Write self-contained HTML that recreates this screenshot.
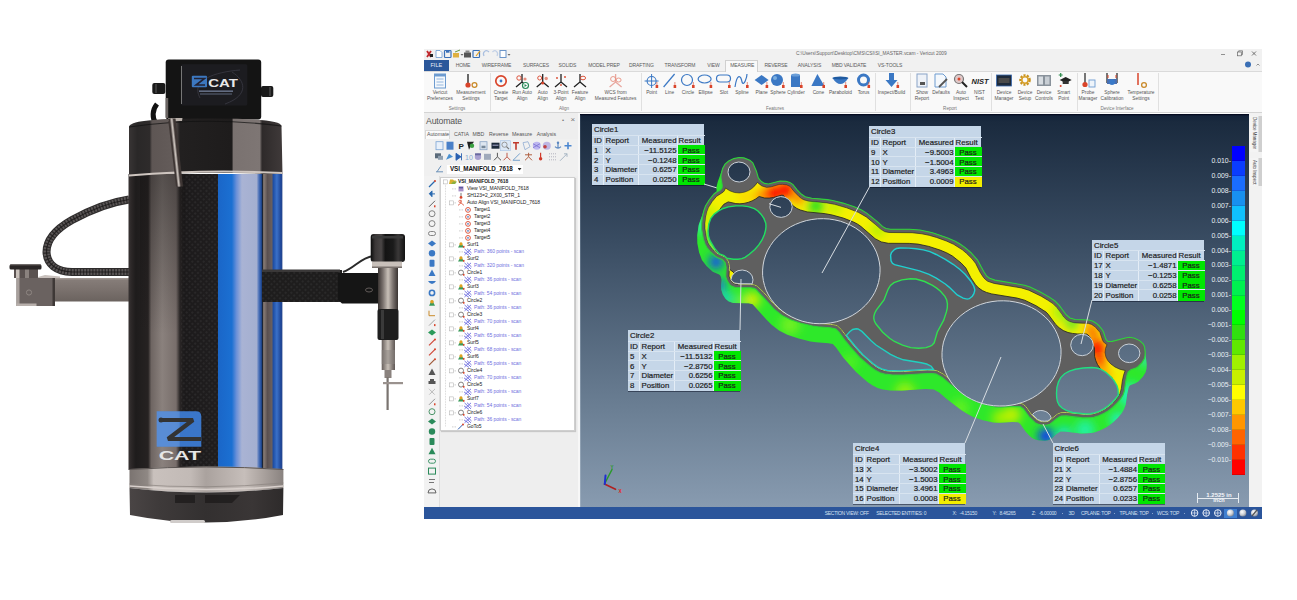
<!DOCTYPE html><html><head><meta charset="utf-8"><style>
*{margin:0;padding:0;box-sizing:border-box}
html,body{width:1297px;height:600px;overflow:hidden;background:#fff;font-family:"Liberation Sans", sans-serif}
.a{position:absolute}
.t{position:absolute;white-space:nowrap;line-height:1}
</style></head><body>
<div class="a" style="left:424px;top:48.5px;width:838px;height:22.5px;background:#f1f1f1"></div>
<div class="a" style="left:424px;top:71px;width:838px;height:42px;background:#f9f9f9;border-top:1px solid #dadada;border-bottom:1px solid #d4d4d4"></div>
<div class="a" style="left:424px;top:59.5px;width:24.5px;height:11.5px;background:#2b579a"></div>
<div class="t" style="left:430.5px;top:62.5px;font-size:5.5px;color:#e8eef8;">FILE</div>
<div class="a" style="left:725px;top:59.5px;width:33px;height:12px;background:#f9f9f9;border:1px solid #d0d0d0;border-bottom:none"></div>
<div class="t" style="left:455.6px;top:62.8px;font-size:5px;color:#5a5a5a;width:14.8px;text-align:center;letter-spacing:-0.1px">HOME</div>
<div class="t" style="left:479.85px;top:62.8px;font-size:5px;color:#5a5a5a;width:33.300000000000004px;text-align:center;letter-spacing:-0.1px">WIREFRAME</div>
<div class="t" style="left:521.2px;top:62.8px;font-size:5px;color:#5a5a5a;width:29.6px;text-align:center;letter-spacing:-0.1px">SURFACES</div>
<div class="t" style="left:556.4px;top:62.8px;font-size:5px;color:#5a5a5a;width:22.200000000000003px;text-align:center;letter-spacing:-0.1px">SOLIDS</div>
<div class="t" style="left:585.5px;top:62.8px;font-size:5px;color:#5a5a5a;width:37.0px;text-align:center;letter-spacing:-0.1px">MODEL PREP</div>
<div class="t" style="left:626.7px;top:62.8px;font-size:5px;color:#5a5a5a;width:29.6px;text-align:center;letter-spacing:-0.1px">DRAFTING</div>
<div class="t" style="left:663.35px;top:62.8px;font-size:5px;color:#5a5a5a;width:33.300000000000004px;text-align:center;letter-spacing:-0.1px">TRANSFORM</div>
<div class="t" style="left:706.0px;top:62.8px;font-size:5px;color:#5a5a5a;width:14.8px;text-align:center;letter-spacing:-0.1px">VIEW</div>
<div class="t" style="left:729.3499999999999px;top:62.8px;font-size:5px;color:#5a5a5a;width:25.900000000000002px;text-align:center;letter-spacing:-0.1px">MEASURE</div>
<div class="t" style="left:763.05px;top:62.8px;font-size:5px;color:#5a5a5a;width:25.900000000000002px;text-align:center;letter-spacing:-0.1px">REVERSE</div>
<div class="t" style="left:794.7px;top:62.8px;font-size:5px;color:#5a5a5a;width:29.6px;text-align:center;letter-spacing:-0.1px">ANALYSIS</div>
<div class="t" style="left:826.8px;top:62.8px;font-size:5px;color:#5a5a5a;width:44.400000000000006px;text-align:center;letter-spacing:-0.1px">MBD VALIDATE</div>
<div class="t" style="left:875.2px;top:62.8px;font-size:5px;color:#5a5a5a;width:29.6px;text-align:center;letter-spacing:-0.1px">VS-TOOLS</div>
<div class="t" style="left:796px;top:51.9px;font-size:4.85px;color:#666;">C:\Users\Support\Desktop\CMS\CSI\SI_MASTER.vcam - Vericut 2009</div>
<svg class="a" style="left:1210px;top:44px" width="54" height="30" viewBox="1210 44 54 30"><line x1="1221" y1="54.5" x2="1225" y2="54.5" stroke="#777" stroke-width="0.8"/><rect x="1237.5" y="52" width="3.8" height="3.8" fill="none" stroke="#666" stroke-width="0.7"/><path d="M1238.7 52 V50.8 H1242.5 V54.6 H1241.3" fill="none" stroke="#666" stroke-width="0.7"/><path d="M1252 51.5 L1256 55.5 M1256 51.5 L1252 55.5" stroke="#555" stroke-width="0.8"/><circle cx="1248" cy="64.5" r="3" fill="#3a6fb5"/><path d="M1256.5 65.5 L1258 64 L1259.5 65.5" fill="none" stroke="#666" stroke-width="0.7"/></svg>
<svg class="a" style="left:0;top:0" width="1297" height="130" viewBox="0 0 1297 130">
<rect x="434.5" y="74" width="11" height="14" fill="#f4f8fc" stroke="#6d9bd0" stroke-width="1"/><rect x="434.5" y="74" width="11" height="2.5" fill="#6d9bd0"/>
<line x1="436.5" y1="79" x2="443.5" y2="79" stroke="#8ab0dc" stroke-width="0.9"/>
<line x1="436.5" y1="82" x2="443.5" y2="82" stroke="#8ab0dc" stroke-width="0.9"/>
<line x1="436.5" y1="85" x2="443.5" y2="85" stroke="#8ab0dc" stroke-width="0.9"/>
<line x1="468" y1="74" x2="468" y2="84" stroke="#444" stroke-width="1.6"/><circle cx="468" cy="85" r="2.6" fill="#d9452b"/><circle cx="474.5" cy="85" r="2.4" fill="none" stroke="#c98a2a" stroke-width="1.3"/>
<circle cx="501" cy="81" r="5.2" fill="none" stroke="#d9452b" stroke-width="1.7"/><circle cx="501" cy="81" r="1.4" fill="#3b78c4"/>
<path d="M522 74 L522 82 L516 87 M522 82 L528 87" fill="none" stroke="#222" stroke-width="1.3"/>
<circle cx="519" cy="78" r="2.2" fill="none" stroke="#d9452b" stroke-width="0.9"/><circle cx="525" cy="79" r="1.6" fill="#e89080"/><circle cx="525.5" cy="85.5" r="3" fill="#fff" stroke="#2a8a5a" stroke-width="1.2"/><path d="M524.5 84 L527 85.5 L524.5 87 Z" fill="#2a8a5a"/>
<path d="M542.7 74 L542.7 82 L536.7 87 M542.7 82 L548.7 87" fill="none" stroke="#222" stroke-width="1.3"/>
<circle cx="539.7" cy="78" r="2" fill="none" stroke="#d9452b" stroke-width="0.9"/><circle cx="546.2" cy="78.5" r="1.7" fill="#e89080"/><circle cx="542.7" cy="83" r="1.5" fill="#d9452b"/>
<path d="M561 74 L561 82 L555 87 M561 82 L567 87" fill="none" stroke="#222" stroke-width="1.3"/>
<circle cx="557" cy="78" r="0.9" fill="#d9452b"/><circle cx="565" cy="77" r="0.9" fill="#d9452b"/><circle cx="561" cy="85" r="0.9" fill="#d9452b"/>
<path d="M580 74 L580 82 L574 87 M580 82 L586 87" fill="none" stroke="#222" stroke-width="1.3"/>
<ellipse cx="583" cy="78" rx="2.6" ry="1.8" fill="none" stroke="#d9452b" stroke-width="0.9"/>
<path d="M615.6 74 L615.6 82 L609.6 87 M615.6 82 L621.6 87" fill="none" stroke="#e8a8a0" stroke-width="1.3"/>
<ellipse cx="613.1" cy="79" rx="2.5" ry="2.5" fill="none" stroke="#e89080" stroke-width="0.9"/><ellipse cx="618.6" cy="80" rx="2.5" ry="2" fill="none" stroke="#e89080" stroke-width="0.9"/>
<circle cx="651.6" cy="81" r="4.5" fill="none" stroke="#3b78c4" stroke-width="1.1"/><path d="M644.6 81 H658.6 M651.6 74 V88" stroke="#3b78c4" stroke-width="1"/>
<rect x="655.6" y="85" width="2.6" height="3" fill="#d9452b"/><line x1="656.9" y1="82" x2="656.9" y2="85" stroke="#d9452b" stroke-width="0.6"/>
<line x1="663.6" y1="87" x2="674.6" y2="74" stroke="#3b78c4" stroke-width="1.2"/>
<rect x="673.6" y="85" width="2.6" height="3" fill="#d9452b"/><line x1="674.9" y1="82" x2="674.9" y2="85" stroke="#d9452b" stroke-width="0.6"/>
<circle cx="687" cy="80" r="5.5" fill="none" stroke="#3b78c4" stroke-width="1.2"/>
<rect x="692" y="85" width="2.6" height="3" fill="#d9452b"/><line x1="693.3" y1="82" x2="693.3" y2="85" stroke="#d9452b" stroke-width="0.6"/>
<ellipse cx="704.6" cy="79" rx="6.5" ry="4" fill="none" stroke="#3b78c4" stroke-width="1.2"/>
<rect x="709.6" y="85" width="2.6" height="3" fill="#d9452b"/><line x1="710.9" y1="82" x2="710.9" y2="85" stroke="#d9452b" stroke-width="0.6"/>
<path d="M720 75 H727 A3.5 3.5 0 0 1 727 82 H720 A3.5 3.5 0 0 1 720 75 Z" fill="none" stroke="#3b78c4" stroke-width="1.2"/>
<rect x="728" y="85" width="2.6" height="3" fill="#d9452b"/><line x1="729.3" y1="82" x2="729.3" y2="85" stroke="#d9452b" stroke-width="0.6"/>
<path d="M735 87 C737 73 741 75 742 82 C744 87 747 77 747 74" fill="none" stroke="#3b78c4" stroke-width="1.2"/>
<rect x="746" y="85" width="2.6" height="3" fill="#d9452b"/><line x1="747.3" y1="82" x2="747.3" y2="85" stroke="#d9452b" stroke-width="0.6"/>
<path d="M754.6 80 L761.6 75 L768.6 80 L761.6 85 Z" fill="#3b78c4"/>
<rect x="765.6" y="85" width="2.6" height="3" fill="#d9452b"/><line x1="766.9" y1="82" x2="766.9" y2="85" stroke="#d9452b" stroke-width="0.6"/>
<circle cx="777" cy="80" r="6" fill="#3b78c4"/><circle cx="775" cy="78" r="2" fill="#7aaee0"/>
<rect x="782" y="85" width="2.6" height="3" fill="#d9452b"/><line x1="783.3" y1="82" x2="783.3" y2="85" stroke="#d9452b" stroke-width="0.6"/>
<rect x="791" y="75" width="9" height="12" fill="#3b78c4"/><ellipse cx="795.5" cy="75" rx="4.5" ry="1.6" fill="#6a9ed8"/>
<rect x="800" y="85" width="2.6" height="3" fill="#d9452b"/><line x1="801.3" y1="82" x2="801.3" y2="85" stroke="#d9452b" stroke-width="0.6"/>
<path d="M817.4 74 L824.4 86 L811.4 86 Z" fill="#3b78c4"/>
<rect x="822.4" y="85" width="2.6" height="3" fill="#d9452b"/><line x1="823.6999999999999" y1="82" x2="823.6999999999999" y2="85" stroke="#d9452b" stroke-width="0.6"/>
<path d="M832.4 78 Q840.4 90 848.4 78 Z" fill="#3b78c4"/><ellipse cx="840.4" cy="78" rx="8" ry="1.5" fill="#1f5aa0"/>
<rect x="844.4" y="85" width="2.6" height="3" fill="#d9452b"/><line x1="845.6999999999999" y1="82" x2="845.6999999999999" y2="85" stroke="#d9452b" stroke-width="0.6"/>
<circle cx="863.5" cy="80" r="5" fill="none" stroke="#3b78c4" stroke-width="3"/>
<rect x="867.5" y="85" width="2.6" height="3" fill="#d9452b"/><line x1="868.8" y1="82" x2="868.8" y2="85" stroke="#d9452b" stroke-width="0.6"/>
<path d="M889.0 73 H894.0 V80 H897.5 L891.5 87 L885.5 80 H889.0 Z" fill="#3b78c4"/>
<rect x="896.5" y="85" width="2.6" height="3" fill="#d9452b"/><line x1="897.8" y1="82" x2="897.8" y2="85" stroke="#d9452b" stroke-width="0.6"/>
<rect x="917" y="74" width="10" height="13" fill="#eef2f8" stroke="#8aa4c8" stroke-width="1"/><rect x="920" y="82" width="5" height="3" fill="#555"/>
<path d="M935 74 H943 L946 77 V87 H935 Z" fill="#f4f8fc" stroke="#6d9bd0" stroke-width="1"/><path d="M939 87 L947 79" stroke="#555" stroke-width="1.8"/>
<circle cx="959" cy="79" r="4.5" fill="#e0c8c8" stroke="#777" stroke-width="1.2"/><circle cx="959" cy="79" r="1.5" fill="#d9452b"/><line x1="962" y1="82" x2="967" y2="87" stroke="#222" stroke-width="2"/>
<text x="971.5" y="84" font-family="Liberation Sans" font-weight="bold" font-style="italic" font-size="7.5" fill="#222">NIST</text>
<rect x="996.5" y="75" width="15" height="11" fill="#1e2a3a" stroke="#3a6ab0" stroke-width="0.8"/><rect x="998.5" y="78" width="11" height="5" fill="#4a4a4a"/>
<circle cx="1025" cy="80" r="4.5" fill="none" stroke="#c8921e" stroke-width="2.6" stroke-dasharray="2 1.2"/><circle cx="1025" cy="80" r="3.2" fill="none" stroke="#d8a22e" stroke-width="1.6"/>
<rect x="1037" y="75" width="14" height="11" fill="#8a939c"/><rect x="1038.5" y="76.5" width="4.5" height="8" fill="#d8dde2"/><rect x="1045" y="76.5" width="4.5" height="8" fill="#c8ced4"/>
<path d="M1059.7 80 L1065.7 77 L1071.7 80 L1065.7 83 Z" fill="#222"/><rect x="1062.7" y="81" width="6" height="3" fill="#333"/><path d="M1058.7 75 H1062.7 M1060.7 73 V77" stroke="#2a8a4a" stroke-width="1.2"/><circle cx="1060.7" cy="86" r="1" fill="#d9452b"/>
<line x1="1085" y1="73" x2="1085" y2="83" stroke="#555" stroke-width="1.6"/><circle cx="1085" cy="84.5" r="2.6" fill="#d9452b"/><rect x="1089" y="80" width="6" height="7" fill="#eef4fa" stroke="#6d9bd0" stroke-width="0.9"/>
<path d="M1107 73 V83 M1117 73 V83" stroke="#555" stroke-width="1.6"/><rect x="1107" y="79" width="10" height="5" fill="#4a6fb0"/><circle cx="1112" cy="82" r="3" fill="#3a7ac8"/><path d="M1108 75 V78 M1116 75 V78" stroke="#d9452b" stroke-width="1"/>
<line x1="1138" y1="73" x2="1138" y2="85" stroke="#d9452b" stroke-width="1.5"/><circle cx="1144" cy="85" r="2.4" fill="none" stroke="#c98a2a" stroke-width="1.3"/>
<path d="M427 51 L431 57 M431 51 L427 57" stroke="#c0282d" stroke-width="1.8"/><rect x="430" y="54" width="3" height="3" fill="#222"/>
<path d="M436 50.5 H440 L442 52.5 V57.5 H436 Z" fill="#fff" stroke="#6d9bd0" stroke-width="0.8"/>
<rect x="444.5" y="50.5" width="6.5" height="7" rx="0.8" fill="none" stroke="#3a70b8" stroke-width="1.2"/><rect x="446" y="50.5" width="3.5" height="2.2" fill="#3a70b8"/>
<path d="M453 53 H459 V57.5 H453 Z" fill="#e0b040"/><path d="M455 52 L460 50" stroke="#6a9a40" stroke-width="1"/><path d="M460.5 54 H463.5 L462 55.8 Z" fill="#666"/>
<rect x="464" y="52.5" width="7" height="5" fill="#555"/><rect x="465.5" y="50.5" width="4" height="2.5" fill="#888"/>
<rect x="473" y="50.5" width="6.5" height="7" rx="0.8" fill="none" stroke="#3a70b8" stroke-width="1.2"/><path d="M476 56 L480 51" stroke="#e0a020" stroke-width="1.2"/>
<path d="M484 56 C482 52 486 49 489 52" fill="none" stroke="#a9bfe0" stroke-width="1.2"/><path d="M493 56 C495 52 491 49 488.5 52" fill="none" stroke="#c0cfe6" stroke-width="1.2" transform="translate(4 0)"/>
<rect x="500" y="50.5" width="6" height="7" fill="#fff" stroke="#6c95c9" stroke-width="1"/><path d="M507.5 54 H510.5 L509 55.8 Z" fill="#666"/>
</svg>
<div class="a" style="left:489.5px;top:73px;width:1px;height:38px;background:#e0e0e0"></div>
<div class="a" style="left:640.5px;top:73px;width:1px;height:38px;background:#e0e0e0"></div>
<div class="a" style="left:874.5px;top:73px;width:1px;height:38px;background:#e0e0e0"></div>
<div class="a" style="left:910px;top:73px;width:1px;height:38px;background:#e0e0e0"></div>
<div class="a" style="left:991px;top:73px;width:1px;height:38px;background:#e0e0e0"></div>
<div class="a" style="left:1076.5px;top:73px;width:1px;height:38px;background:#e0e0e0"></div>
<div class="a" style="left:1157.5px;top:73px;width:1px;height:38px;background:#e0e0e0"></div>
<div class="t" style="left:410.0px;top:91px;font-size:4.8px;color:#555;width:60px;text-align:center">Vericut</div>
<div class="t" style="left:410.0px;top:96.6px;font-size:4.8px;color:#555;width:60px;text-align:center">Preferences</div>
<div class="t" style="left:441.0px;top:91px;font-size:4.8px;color:#555;width:60px;text-align:center">Measurement</div>
<div class="t" style="left:441.0px;top:96.6px;font-size:4.8px;color:#555;width:60px;text-align:center">Settings</div>
<div class="t" style="left:471.0px;top:91px;font-size:4.8px;color:#555;width:60px;text-align:center">Create</div>
<div class="t" style="left:471.0px;top:96.6px;font-size:4.8px;color:#555;width:60px;text-align:center">Target</div>
<div class="t" style="left:492.0px;top:91px;font-size:4.8px;color:#555;width:60px;text-align:center">Run Auto</div>
<div class="t" style="left:492.0px;top:96.6px;font-size:4.8px;color:#555;width:60px;text-align:center">Align</div>
<div class="t" style="left:512.7px;top:91px;font-size:4.8px;color:#555;width:60px;text-align:center">Auto</div>
<div class="t" style="left:512.7px;top:96.6px;font-size:4.8px;color:#555;width:60px;text-align:center">Align</div>
<div class="t" style="left:531.0px;top:91px;font-size:4.8px;color:#555;width:60px;text-align:center">3-Point</div>
<div class="t" style="left:531.0px;top:96.6px;font-size:4.8px;color:#555;width:60px;text-align:center">Align</div>
<div class="t" style="left:550.0px;top:91px;font-size:4.8px;color:#555;width:60px;text-align:center">Feature</div>
<div class="t" style="left:550.0px;top:96.6px;font-size:4.8px;color:#555;width:60px;text-align:center">Align</div>
<div class="t" style="left:585.6px;top:91px;font-size:4.8px;color:#555;width:60px;text-align:center">WCS from</div>
<div class="t" style="left:585.6px;top:96.6px;font-size:4.8px;color:#555;width:60px;text-align:center">Measured Features</div>
<div class="t" style="left:621.6px;top:91px;font-size:4.8px;color:#555;width:60px;text-align:center">Point</div>
<div class="t" style="left:639.6px;top:91px;font-size:4.8px;color:#555;width:60px;text-align:center">Line</div>
<div class="t" style="left:658.0px;top:91px;font-size:4.8px;color:#555;width:60px;text-align:center">Circle</div>
<div class="t" style="left:675.6px;top:91px;font-size:4.8px;color:#555;width:60px;text-align:center">Ellipse</div>
<div class="t" style="left:694.0px;top:91px;font-size:4.8px;color:#555;width:60px;text-align:center">Slot</div>
<div class="t" style="left:712.0px;top:91px;font-size:4.8px;color:#555;width:60px;text-align:center">Spline</div>
<div class="t" style="left:731.6px;top:91px;font-size:4.8px;color:#555;width:60px;text-align:center">Plane</div>
<div class="t" style="left:748.0px;top:91px;font-size:4.8px;color:#555;width:60px;text-align:center">Sphere</div>
<div class="t" style="left:766.0px;top:91px;font-size:4.8px;color:#555;width:60px;text-align:center">Cylinder</div>
<div class="t" style="left:788.4px;top:91px;font-size:4.8px;color:#555;width:60px;text-align:center">Cone</div>
<div class="t" style="left:810.4px;top:91px;font-size:4.8px;color:#555;width:60px;text-align:center">Paraboloid</div>
<div class="t" style="left:833.5px;top:91px;font-size:4.8px;color:#555;width:60px;text-align:center">Torus</div>
<div class="t" style="left:861.5px;top:91px;font-size:4.8px;color:#555;width:60px;text-align:center">Inspect/Build</div>
<div class="t" style="left:892.0px;top:91px;font-size:4.8px;color:#555;width:60px;text-align:center">Show</div>
<div class="t" style="left:892.0px;top:96.6px;font-size:4.8px;color:#555;width:60px;text-align:center">Report</div>
<div class="t" style="left:911.0px;top:91px;font-size:4.8px;color:#555;width:60px;text-align:center">Defaults</div>
<div class="t" style="left:931.0px;top:91px;font-size:4.8px;color:#555;width:60px;text-align:center">Auto</div>
<div class="t" style="left:931.0px;top:96.6px;font-size:4.8px;color:#555;width:60px;text-align:center">Inspect</div>
<div class="t" style="left:949.5px;top:91px;font-size:4.8px;color:#555;width:60px;text-align:center">NIST</div>
<div class="t" style="left:949.5px;top:96.6px;font-size:4.8px;color:#555;width:60px;text-align:center">Test</div>
<div class="t" style="left:974.0px;top:91px;font-size:4.8px;color:#555;width:60px;text-align:center">Device</div>
<div class="t" style="left:974.0px;top:96.6px;font-size:4.8px;color:#555;width:60px;text-align:center">Manager</div>
<div class="t" style="left:995.0px;top:91px;font-size:4.8px;color:#555;width:60px;text-align:center">Device</div>
<div class="t" style="left:995.0px;top:96.6px;font-size:4.8px;color:#555;width:60px;text-align:center">Setup</div>
<div class="t" style="left:1014.0px;top:91px;font-size:4.8px;color:#555;width:60px;text-align:center">Device</div>
<div class="t" style="left:1014.0px;top:96.6px;font-size:4.8px;color:#555;width:60px;text-align:center">Controls</div>
<div class="t" style="left:1033.7px;top:91px;font-size:4.8px;color:#555;width:60px;text-align:center">Smart</div>
<div class="t" style="left:1033.7px;top:96.6px;font-size:4.8px;color:#555;width:60px;text-align:center">Point</div>
<div class="t" style="left:1058.0px;top:91px;font-size:4.8px;color:#555;width:60px;text-align:center">Probe</div>
<div class="t" style="left:1058.0px;top:96.6px;font-size:4.8px;color:#555;width:60px;text-align:center">Manager</div>
<div class="t" style="left:1082.0px;top:91px;font-size:4.8px;color:#555;width:60px;text-align:center">Sphere</div>
<div class="t" style="left:1082.0px;top:96.6px;font-size:4.8px;color:#555;width:60px;text-align:center">Calibration</div>
<div class="t" style="left:1111.0px;top:91px;font-size:4.8px;color:#555;width:60px;text-align:center">Temperature</div>
<div class="t" style="left:1111.0px;top:96.6px;font-size:4.8px;color:#555;width:60px;text-align:center">Settings</div>
<div class="t" style="left:427.0px;top:107.2px;font-size:4.6px;color:#777;width:60px;text-align:center">Settings</div>
<div class="t" style="left:534.0px;top:107.2px;font-size:4.6px;color:#777;width:60px;text-align:center">Align</div>
<div class="t" style="left:745.0px;top:107.2px;font-size:4.6px;color:#777;width:60px;text-align:center">Features</div>
<div class="t" style="left:920.0px;top:107.2px;font-size:4.6px;color:#777;width:60px;text-align:center">Report</div>
<div class="t" style="left:1087.0px;top:107.2px;font-size:4.6px;color:#777;width:60px;text-align:center">Device Interface</div>
<div class="a" style="left:424px;top:113px;width:156px;height:394px;background:#eeeeee"></div>
<div class="t" style="left:426px;top:116.8px;font-size:8.7px;color:#555;letter-spacing:-0.15px">Automate</div>
<div class="t" style="left:562px;top:117px;font-size:6px;color:#777;">&#8226;</div>
<div class="t" style="left:570.5px;top:116px;font-size:8px;color:#777;">&#215;</div>
<div class="a" style="left:425.2px;top:130px;width:25.3px;height:9px;background:#fafafa;border:1px solid #d8d8d8;border-bottom:none"></div>
<div class="t" style="left:427px;top:132.2px;font-size:5.2px;color:#555;">Automate</div>
<div class="t" style="left:454px;top:132.2px;font-size:5.2px;color:#555;">CATIA</div>
<div class="t" style="left:472.6px;top:132.2px;font-size:5.2px;color:#555;">MBD</div>
<div class="t" style="left:489px;top:132.2px;font-size:5.2px;color:#555;">Reverse</div>
<div class="t" style="left:512px;top:132.2px;font-size:5.2px;color:#555;">Measure</div>
<div class="t" style="left:536.7px;top:132.2px;font-size:5.2px;color:#555;">Analysis</div>
<div class="a" style="left:424px;top:139px;width:154px;height:37px;background:#f0f0f0"></div>
<div class="a" style="left:424px;top:176px;width:16px;height:331px;background:#f2f2f2;border-right:1px solid #dedede"></div>
<svg class="a" style="left:0;top:0" width="600" height="520" viewBox="0 0 600 520"><rect x="436" y="141.7" width="7" height="8" fill="#e8f0fa" stroke="#7aa4d4" stroke-width="0.8"/><rect x="446.5" y="141.7" width="7" height="8" fill="#4a80c8"/><text x="458.5" y="148.7" font-family="Liberation Sans" font-weight="bold" font-size="8" fill="#222">P</text><path d="M467 141.7 H474 L471 145.7 L469 149.7 Z" fill="#222"/><circle cx="472" cy="145.7" r="2.2" fill="#3aa040"/><rect x="480" y="141.7" width="7" height="8" fill="#dde6f0" stroke="#8aa4c4" stroke-width="0.8"/><rect x="481.5" y="145.7" width="4" height="2.5" fill="#789"/><rect x="491.5" y="142.7" width="8" height="6" fill="#1e2a3a"/><rect x="492.5" y="144.7" width="6" height="1" fill="#aac"/><rect x="500.5" y="140.7" width="10" height="10" fill="#dce8f6" stroke="#a8c4e4" stroke-width="0.6"/><circle cx="504.5" cy="144.7" r="2.6" fill="none" stroke="#999" stroke-width="1"/><line x1="506.5" y1="146.7" x2="509" y2="149.2" stroke="#777" stroke-width="1.2"/><path d="M513 142.7 H519 M516 142.7 V149.7" stroke="#c0392b" stroke-width="1.6"/><path d="M523 142.7 L528 141.7 L530 146.7 L525 149.7 Z" fill="none" stroke="#9bb3d6" stroke-width="0.9"/><circle cx="536.8" cy="145.7" r="4" fill="#b0a8f0" opacity="0.8"/><path d="M533 143.7 L540 147.7 M533 147.7 L540 143.7" stroke="#7a70d0" stroke-width="0.8"/><circle cx="546.8" cy="145.7" r="4" fill="#b0a8e0" opacity="0.8"/><circle cx="545" cy="146.7" r="1.8" fill="#c04040"/><path d="M555 146.7 Q558 149.7 561 146.7 M558 142.7 V148.7" fill="none" stroke="#5a87c0" stroke-width="1.2"/><circle cx="558" cy="142.7" r="1.2" fill="#5a87c0"/><path d="M564.5 145.7 H571.5 M568 142.2 V149.2" stroke="#4a86d0" stroke-width="1.6"/><rect x="435" y="153.3" width="6" height="5" fill="#5a6a7a"/><rect x="438" y="155.8" width="5" height="4" fill="#90a0b0"/><path d="M446 159.8 L449 153.8 L453 156.8 Z" fill="#4a90d0"/><path d="M456 153.3 L461 156.8 L456 160.3 Z M461.5 153.3 V160.3" fill="#2a60b0" stroke="#2a60b0" stroke-width="0.9"/><text x="465" y="159.8" font-family="Liberation Sans" font-size="7" fill="#88a8d0">10</text><circle cx="478" cy="156.8" r="3.2" fill="#a8a0d0"/><rect x="475" y="153.3" width="6" height="2" fill="#6a6aa0"/><rect x="484" y="153.8" width="7" height="6" fill="#a0aabb"/><path d="M497.4 152.8 V156.8 L494 160.3 M497.4 156.8 L501 160.3" fill="none" stroke="#555" stroke-width="1"/><path d="M507 152.8 V156.8 L503.5 160.3 M507 156.8 L510.5 160.3" fill="none" stroke="#c05a4a" stroke-width="1"/><path d="M513 160.3 L520 153.3 M513 160.3 H520" fill="none" stroke="#6a9ac8" stroke-width="0.9"/><path d="M528.6 152.8 V156.8 L525 160.3 M528.6 156.8 L532 160.3 M525 154.8 H532" fill="none" stroke="#b06040" stroke-width="1"/><line x1="540.6" y1="152.8" x2="540.6" y2="157.8" stroke="#d03a2a" stroke-width="1.2"/><circle cx="540.6" cy="158.8" r="1.7" fill="#d03a2a"/><path d="M549 153.8 H557 M549 156.8 H557 M549 159.8 H557" stroke="#99a" stroke-width="0.7" stroke-dasharray="1 1"/><path d="M560 160.8 L567 153.8 M564 153.8 H567 V156.8" fill="none" stroke="#a0b0c0" stroke-width="0.9"/><path d="M436 171.8 H443 M437 171.8 L441 165.8" stroke="#6a90b8" stroke-width="1"/><line x1="429" y1="187.0" x2="435" y2="181.0" stroke="#2a6ab0" stroke-width="1.2"/><circle cx="435" cy="181.0" r="1" fill="#d9452b"/><path d="M429 193.9 L432 190.9 L432 196.9 M432 193.9 H435" fill="#2a6ab0" stroke="#2a6ab0" stroke-width="1"/><line x1="429" y1="206.8" x2="435" y2="200.8" stroke="#555" stroke-width="0.9"/><rect x="434" y="205.3" width="1.5" height="2" fill="#d9452b"/><circle cx="432" cy="213.7" r="3" fill="none" stroke="#777" stroke-width="0.9"/><circle cx="432" cy="223.6" r="3" fill="none" stroke="#777" stroke-width="0.9"/><rect x="428.5" y="231.5" width="7" height="4" rx="2" fill="none" stroke="#777" stroke-width="0.9"/><path d="M428 243.4 L432 240.4 L436 243.4 L432 246.4 Z" fill="#3a78c4"/><circle cx="432" cy="253.3" r="3.2" fill="#3a78c4"/><rect x="429.5" y="259.7" width="5" height="7" rx="1" fill="#3a78c4"/><path d="M432 269.6 L435.5 276.1 L428.5 276.1 Z" fill="#3a78c4"/><path d="M428 281.0 Q432 287.0 436 281.0 Z" fill="#3a78c4"/><circle cx="432" cy="292.9" r="2.6" fill="none" stroke="#3a78c4" stroke-width="1.6"/><path d="M429 305.8 L432 299.8 L435 305.8 Z" fill="#3a9a5a"/><circle cx="432" cy="301.8" r="1.8" fill="#e0a020"/><path d="M429 315.70000000000005 V310.70000000000005 M429 315.70000000000005 H435" stroke="#c98a2a" stroke-width="1"/><line x1="429" y1="325.6" x2="435" y2="319.6" stroke="#999" stroke-width="0.9"/><rect x="434" y="324.1" width="1.5" height="2" fill="#d9452b"/><path d="M428 332.5 L432 329.5 L436 332.5 L432 335.5 Z" fill="#2a9a5a"/><line x1="429" y1="345.4" x2="435" y2="339.4" stroke="#d04a3a" stroke-width="1.2"/><circle cx="435" cy="339.4" r="1" fill="#d9452b"/><line x1="429" y1="355.3" x2="435" y2="349.3" stroke="#d04a3a" stroke-width="1.2"/><circle cx="435" cy="349.3" r="1" fill="#d9452b"/><line x1="429" y1="365.20000000000005" x2="435" y2="359.20000000000005" stroke="#a05a3a" stroke-width="1.2"/><circle cx="435" cy="359.20000000000005" r="1" fill="#d9452b"/><path d="M432 368.6 L435.5 375.1 L428.5 375.1 Z" fill="#555"/><rect x="428.5" y="381.0" width="7" height="3" fill="#555"/><rect x="430" y="379.0" width="4" height="2" fill="#555"/><path d="M429 388.9 L435 394.9 M435 388.9 L429 394.9" stroke="#666" stroke-width="0.7" stroke-dasharray="0.8 0.8"/><line x1="429" y1="404.8" x2="435" y2="398.8" stroke="#888" stroke-width="0.9"/><rect x="434" y="403.3" width="1.5" height="2" fill="#d9452b"/><circle cx="432" cy="411.70000000000005" r="3" fill="none" stroke="#3a8a5a" stroke-width="0.9"/><path d="M428 421.6 L432 418.6 L436 421.6 L432 424.6 Z" fill="#2a8a5a"/><circle cx="432" cy="431.5" r="3.2" fill="#2a8a5a"/><rect x="429.5" y="437.90000000000003" width="5" height="7" rx="1" fill="#2a8a5a"/><path d="M432 447.8 L435.5 454.3 L428.5 454.3 Z" fill="#2a8a5a"/><rect x="428.5" y="459.2" width="7" height="4" rx="2" fill="none" stroke="#2a8a5a" stroke-width="0.9"/><rect x="428.5" y="468.1" width="7" height="6" fill="none" stroke="#2a8a5a" stroke-width="1"/><path d="M429 479.5 H435 M429 482.5 H434" stroke="#555" stroke-width="0.8"/><path d="M428 492.90000000000003 A4 4 0 0 1 436 492.90000000000003 Z" fill="none" stroke="#555" stroke-width="0.9"/></svg>
<div class="a" style="left:446.8px;top:165px;width:76px;height:8.5px;background:#fff"></div>
<div class="t" style="left:450px;top:166.2px;font-size:6.3px;color:#111;font-weight:bold;letter-spacing:-0.1px">VSI_MANIFOLD_7618</div>
<div class="a" style="left:517.5px;top:168px;width:4px;height:2.5px;background:#222;clip-path:polygon(0 0,100% 0,50% 100%)"></div>
<div class="a" style="left:440px;top:177px;width:134.5px;height:253.5px;background:#fff;border:1px solid #cfcfcf;box-shadow:1px 1px 1px #c8c8c8"></div>
<div class="t" style="left:458px;top:179.3px;font-size:5.0px;color:#1a1a1a;font-weight:bold;letter-spacing:-0.05px">VSI_MANIFOLD_7618</div>
<div class="t" style="left:467px;top:186.3px;font-size:5.0px;color:#1a1a1a;letter-spacing:-0.05px">View VSI_MANIFOLD_7618</div>
<div class="t" style="left:467px;top:193.3px;font-size:5.0px;color:#1a1a1a;letter-spacing:-0.05px">SH123=2_2X00_STR_1</div>
<div class="t" style="left:467px;top:200.3px;font-size:5.0px;color:#1a1a1a;letter-spacing:-0.05px">Auto Align VSI_MANIFOLD_7618</div>
<div class="t" style="left:474px;top:207.3px;font-size:5.0px;color:#1a1a1a;letter-spacing:-0.05px">Target1</div>
<div class="t" style="left:474px;top:214.3px;font-size:5.0px;color:#1a1a1a;letter-spacing:-0.05px">Target2</div>
<div class="t" style="left:474px;top:221.3px;font-size:5.0px;color:#1a1a1a;letter-spacing:-0.05px">Target3</div>
<div class="t" style="left:474px;top:228.3px;font-size:5.0px;color:#1a1a1a;letter-spacing:-0.05px">Target4</div>
<div class="t" style="left:474px;top:235.3px;font-size:5.0px;color:#1a1a1a;letter-spacing:-0.05px">Target5</div>
<div class="t" style="left:467px;top:242.3px;font-size:5.0px;color:#1a1a1a;letter-spacing:-0.05px">Surf1</div>
<div class="t" style="left:474px;top:249.3px;font-size:5.0px;color:#6f6fe0;letter-spacing:-0.05px">Path: 360 points - scan</div>
<div class="t" style="left:467px;top:256.29999999999995px;font-size:5.0px;color:#1a1a1a;letter-spacing:-0.05px">Surf2</div>
<div class="t" style="left:474px;top:263.29999999999995px;font-size:5.0px;color:#6f6fe0;letter-spacing:-0.05px">Path: 320 points - scan</div>
<div class="t" style="left:467px;top:270.29999999999995px;font-size:5.0px;color:#1a1a1a;letter-spacing:-0.05px">Circle1</div>
<div class="t" style="left:474px;top:277.29999999999995px;font-size:5.0px;color:#6f6fe0;letter-spacing:-0.05px">Path: 36 points - scan</div>
<div class="t" style="left:467px;top:284.29999999999995px;font-size:5.0px;color:#1a1a1a;letter-spacing:-0.05px">Surf3</div>
<div class="t" style="left:474px;top:291.29999999999995px;font-size:5.0px;color:#6f6fe0;letter-spacing:-0.05px">Path: 54 points - scan</div>
<div class="t" style="left:467px;top:298.29999999999995px;font-size:5.0px;color:#1a1a1a;letter-spacing:-0.05px">Circle2</div>
<div class="t" style="left:474px;top:305.29999999999995px;font-size:5.0px;color:#6f6fe0;letter-spacing:-0.05px">Path: 36 points - scan</div>
<div class="t" style="left:467px;top:312.29999999999995px;font-size:5.0px;color:#1a1a1a;letter-spacing:-0.05px">Circle3</div>
<div class="t" style="left:474px;top:319.29999999999995px;font-size:5.0px;color:#6f6fe0;letter-spacing:-0.05px">Path: 70 points - scan</div>
<div class="t" style="left:467px;top:326.29999999999995px;font-size:5.0px;color:#1a1a1a;letter-spacing:-0.05px">Surf4</div>
<div class="t" style="left:474px;top:333.29999999999995px;font-size:5.0px;color:#6f6fe0;letter-spacing:-0.05px">Path: 65 points - scan</div>
<div class="t" style="left:467px;top:340.29999999999995px;font-size:5.0px;color:#1a1a1a;letter-spacing:-0.05px">Surf5</div>
<div class="t" style="left:474px;top:347.29999999999995px;font-size:5.0px;color:#6f6fe0;letter-spacing:-0.05px">Path: 68 points - scan</div>
<div class="t" style="left:467px;top:354.29999999999995px;font-size:5.0px;color:#1a1a1a;letter-spacing:-0.05px">Surf6</div>
<div class="t" style="left:474px;top:361.29999999999995px;font-size:5.0px;color:#6f6fe0;letter-spacing:-0.05px">Path: 65 points - scan</div>
<div class="t" style="left:467px;top:368.29999999999995px;font-size:5.0px;color:#1a1a1a;letter-spacing:-0.05px">Circle4</div>
<div class="t" style="left:474px;top:375.29999999999995px;font-size:5.0px;color:#6f6fe0;letter-spacing:-0.05px">Path: 70 points - scan</div>
<div class="t" style="left:467px;top:382.29999999999995px;font-size:5.0px;color:#1a1a1a;letter-spacing:-0.05px">Circle5</div>
<div class="t" style="left:474px;top:389.29999999999995px;font-size:5.0px;color:#6f6fe0;letter-spacing:-0.05px">Path: 36 points - scan</div>
<div class="t" style="left:467px;top:396.29999999999995px;font-size:5.0px;color:#1a1a1a;letter-spacing:-0.05px">Surf7</div>
<div class="t" style="left:474px;top:403.29999999999995px;font-size:5.0px;color:#6f6fe0;letter-spacing:-0.05px">Path: 54 points - scan</div>
<div class="t" style="left:467px;top:410.29999999999995px;font-size:5.0px;color:#1a1a1a;letter-spacing:-0.05px">Circle6</div>
<div class="t" style="left:474px;top:417.29999999999995px;font-size:5.0px;color:#6f6fe0;letter-spacing:-0.05px">Path: 36 points - scan</div>
<div class="t" style="left:467px;top:424.29999999999995px;font-size:5.0px;color:#1a1a1a;letter-spacing:-0.05px">GoTo5</div>
<svg class="a" style="left:0;top:0" width="600" height="520" viewBox="0 0 600 520"><rect x="443.5" y="179.9" width="4" height="4" fill="#fff" stroke="#aaa" stroke-width="0.5"/><path d="M449 183.9 L450 179.4 H453 L454 180.4 H456 L455 183.9 Z" fill="#d8b030"/><path d="M451 183.9 L453 181.4 H457 L455 183.9 Z" fill="#8ab040"/><line x1="452" y1="188.9" x2="456" y2="188.9" stroke="#999" stroke-width="0.6" stroke-dasharray="0.8 0.8"/><rect x="458.5" y="186.4" width="5" height="5" fill="#a890c8"/><rect x="459" y="186.9" width="4" height="1.5" fill="#5a5aa0"/><line x1="452" y1="195.9" x2="456" y2="195.9" stroke="#999" stroke-width="0.6" stroke-dasharray="0.8 0.8"/><line x1="461" y1="192.9" x2="461" y2="196.9" stroke="#555" stroke-width="0.8"/><circle cx="461" cy="197.4" r="1.4" fill="#d9452b"/><line x1="452" y1="202.9" x2="456" y2="202.9" stroke="#999" stroke-width="0.6" stroke-dasharray="0.8 0.8"/><rect x="449.5" y="200.9" width="4" height="4" fill="#fff" stroke="#aaa" stroke-width="0.5"/><path d="M461 199.9 V202.9 L458 205.4 M461 202.9 L464 205.4" fill="none" stroke="#d9452b" stroke-width="0.8"/><circle cx="460" cy="201.4" r="1.2" fill="none" stroke="#d9452b" stroke-width="0.6"/><line x1="459" y1="209.9" x2="463" y2="209.9" stroke="#999" stroke-width="0.6" stroke-dasharray="0.8 0.8"/><circle cx="468" cy="209.9" r="2.4" fill="none" stroke="#d9452b" stroke-width="0.9"/><circle cx="468" cy="209.9" r="0.8" fill="#3a70c0"/><line x1="459" y1="216.9" x2="463" y2="216.9" stroke="#999" stroke-width="0.6" stroke-dasharray="0.8 0.8"/><circle cx="468" cy="216.9" r="2.4" fill="none" stroke="#d9452b" stroke-width="0.9"/><circle cx="468" cy="216.9" r="0.8" fill="#3a70c0"/><line x1="459" y1="223.9" x2="463" y2="223.9" stroke="#999" stroke-width="0.6" stroke-dasharray="0.8 0.8"/><circle cx="468" cy="223.9" r="2.4" fill="none" stroke="#d9452b" stroke-width="0.9"/><circle cx="468" cy="223.9" r="0.8" fill="#3a70c0"/><line x1="459" y1="230.9" x2="463" y2="230.9" stroke="#999" stroke-width="0.6" stroke-dasharray="0.8 0.8"/><circle cx="468" cy="230.9" r="2.4" fill="none" stroke="#d9452b" stroke-width="0.9"/><circle cx="468" cy="230.9" r="0.8" fill="#3a70c0"/><line x1="459" y1="237.9" x2="463" y2="237.9" stroke="#999" stroke-width="0.6" stroke-dasharray="0.8 0.8"/><circle cx="468" cy="237.9" r="2.4" fill="none" stroke="#d9452b" stroke-width="0.9"/><circle cx="468" cy="237.9" r="0.8" fill="#3a70c0"/><line x1="452" y1="244.9" x2="456" y2="244.9" stroke="#999" stroke-width="0.6" stroke-dasharray="0.8 0.8"/><rect x="449.5" y="242.9" width="4" height="4" fill="#fff" stroke="#aaa" stroke-width="0.5"/><path d="M458 247.4 L461 242.4 L464 247.4 Z" fill="#3a9a5a"/><circle cx="461" cy="243.9" r="1.6" fill="#e0a020"/><rect x="463" y="245.9" width="1.5" height="1.8" fill="#d9452b"/><line x1="459" y1="251.9" x2="463" y2="251.9" stroke="#999" stroke-width="0.6" stroke-dasharray="0.8 0.8"/><path d="M464.5 248.9 L471 254.9 M467 248.70000000000002 L471.5 252.9 M464 251.9 L469 255.4 M471 248.9 L464.5 254.9" stroke="#6a6ae0" stroke-width="0.9"/><line x1="452" y1="258.9" x2="456" y2="258.9" stroke="#999" stroke-width="0.6" stroke-dasharray="0.8 0.8"/><rect x="449.5" y="256.9" width="4" height="4" fill="#fff" stroke="#aaa" stroke-width="0.5"/><path d="M458 261.4 L461 256.4 L464 261.4 Z" fill="#3a9a5a"/><circle cx="461" cy="257.9" r="1.6" fill="#e0a020"/><rect x="463" y="259.9" width="1.5" height="1.8" fill="#d9452b"/><line x1="459" y1="265.9" x2="463" y2="265.9" stroke="#999" stroke-width="0.6" stroke-dasharray="0.8 0.8"/><path d="M464.5 262.9 L471 268.9 M467 262.7 L471.5 266.9 M464 265.9 L469 269.4 M471 262.9 L464.5 268.9" stroke="#6a6ae0" stroke-width="0.9"/><line x1="452" y1="272.9" x2="456" y2="272.9" stroke="#999" stroke-width="0.6" stroke-dasharray="0.8 0.8"/><rect x="449.5" y="270.9" width="4" height="4" fill="#fff" stroke="#aaa" stroke-width="0.5"/><circle cx="461" cy="272.59999999999997" r="2.5" fill="none" stroke="#666" stroke-width="0.8"/><rect x="463" y="273.9" width="1.5" height="1.8" fill="#d9452b"/><line x1="459" y1="279.9" x2="463" y2="279.9" stroke="#999" stroke-width="0.6" stroke-dasharray="0.8 0.8"/><path d="M464.5 276.9 L471 282.9 M467 276.7 L471.5 280.9 M464 279.9 L469 283.4 M471 276.9 L464.5 282.9" stroke="#6a6ae0" stroke-width="0.9"/><line x1="452" y1="286.9" x2="456" y2="286.9" stroke="#999" stroke-width="0.6" stroke-dasharray="0.8 0.8"/><rect x="449.5" y="284.9" width="4" height="4" fill="#fff" stroke="#aaa" stroke-width="0.5"/><path d="M458 289.4 L461 284.4 L464 289.4 Z" fill="#3a9a5a"/><circle cx="461" cy="285.9" r="1.6" fill="#e0a020"/><rect x="463" y="287.9" width="1.5" height="1.8" fill="#d9452b"/><line x1="459" y1="293.9" x2="463" y2="293.9" stroke="#999" stroke-width="0.6" stroke-dasharray="0.8 0.8"/><path d="M464.5 290.9 L471 296.9 M467 290.7 L471.5 294.9 M464 293.9 L469 297.4 M471 290.9 L464.5 296.9" stroke="#6a6ae0" stroke-width="0.9"/><line x1="452" y1="300.9" x2="456" y2="300.9" stroke="#999" stroke-width="0.6" stroke-dasharray="0.8 0.8"/><rect x="449.5" y="298.9" width="4" height="4" fill="#fff" stroke="#aaa" stroke-width="0.5"/><circle cx="461" cy="300.59999999999997" r="2.5" fill="none" stroke="#666" stroke-width="0.8"/><rect x="463" y="301.9" width="1.5" height="1.8" fill="#d9452b"/><line x1="459" y1="307.9" x2="463" y2="307.9" stroke="#999" stroke-width="0.6" stroke-dasharray="0.8 0.8"/><path d="M464.5 304.9 L471 310.9 M467 304.7 L471.5 308.9 M464 307.9 L469 311.4 M471 304.9 L464.5 310.9" stroke="#6a6ae0" stroke-width="0.9"/><line x1="452" y1="314.9" x2="456" y2="314.9" stroke="#999" stroke-width="0.6" stroke-dasharray="0.8 0.8"/><rect x="449.5" y="312.9" width="4" height="4" fill="#fff" stroke="#aaa" stroke-width="0.5"/><circle cx="461" cy="314.59999999999997" r="2.5" fill="none" stroke="#666" stroke-width="0.8"/><rect x="463" y="315.9" width="1.5" height="1.8" fill="#d9452b"/><line x1="459" y1="321.9" x2="463" y2="321.9" stroke="#999" stroke-width="0.6" stroke-dasharray="0.8 0.8"/><path d="M464.5 318.9 L471 324.9 M467 318.7 L471.5 322.9 M464 321.9 L469 325.4 M471 318.9 L464.5 324.9" stroke="#6a6ae0" stroke-width="0.9"/><line x1="452" y1="328.9" x2="456" y2="328.9" stroke="#999" stroke-width="0.6" stroke-dasharray="0.8 0.8"/><rect x="449.5" y="326.9" width="4" height="4" fill="#fff" stroke="#aaa" stroke-width="0.5"/><path d="M458 331.4 L461 326.4 L464 331.4 Z" fill="#3a9a5a"/><circle cx="461" cy="327.9" r="1.6" fill="#e0a020"/><rect x="463" y="329.9" width="1.5" height="1.8" fill="#d9452b"/><line x1="459" y1="335.9" x2="463" y2="335.9" stroke="#999" stroke-width="0.6" stroke-dasharray="0.8 0.8"/><path d="M464.5 332.9 L471 338.9 M467 332.7 L471.5 336.9 M464 335.9 L469 339.4 M471 332.9 L464.5 338.9" stroke="#6a6ae0" stroke-width="0.9"/><line x1="452" y1="342.9" x2="456" y2="342.9" stroke="#999" stroke-width="0.6" stroke-dasharray="0.8 0.8"/><rect x="449.5" y="340.9" width="4" height="4" fill="#fff" stroke="#aaa" stroke-width="0.5"/><path d="M458 345.4 L461 340.4 L464 345.4 Z" fill="#3a9a5a"/><circle cx="461" cy="341.9" r="1.6" fill="#e0a020"/><rect x="463" y="343.9" width="1.5" height="1.8" fill="#d9452b"/><line x1="459" y1="349.9" x2="463" y2="349.9" stroke="#999" stroke-width="0.6" stroke-dasharray="0.8 0.8"/><path d="M464.5 346.9 L471 352.9 M467 346.7 L471.5 350.9 M464 349.9 L469 353.4 M471 346.9 L464.5 352.9" stroke="#6a6ae0" stroke-width="0.9"/><line x1="452" y1="356.9" x2="456" y2="356.9" stroke="#999" stroke-width="0.6" stroke-dasharray="0.8 0.8"/><rect x="449.5" y="354.9" width="4" height="4" fill="#fff" stroke="#aaa" stroke-width="0.5"/><path d="M458 359.4 L461 354.4 L464 359.4 Z" fill="#3a9a5a"/><circle cx="461" cy="355.9" r="1.6" fill="#e0a020"/><rect x="463" y="357.9" width="1.5" height="1.8" fill="#d9452b"/><line x1="459" y1="363.9" x2="463" y2="363.9" stroke="#999" stroke-width="0.6" stroke-dasharray="0.8 0.8"/><path d="M464.5 360.9 L471 366.9 M467 360.7 L471.5 364.9 M464 363.9 L469 367.4 M471 360.9 L464.5 366.9" stroke="#6a6ae0" stroke-width="0.9"/><line x1="452" y1="370.9" x2="456" y2="370.9" stroke="#999" stroke-width="0.6" stroke-dasharray="0.8 0.8"/><rect x="449.5" y="368.9" width="4" height="4" fill="#fff" stroke="#aaa" stroke-width="0.5"/><circle cx="461" cy="370.59999999999997" r="2.5" fill="none" stroke="#666" stroke-width="0.8"/><rect x="463" y="371.9" width="1.5" height="1.8" fill="#d9452b"/><line x1="459" y1="377.9" x2="463" y2="377.9" stroke="#999" stroke-width="0.6" stroke-dasharray="0.8 0.8"/><path d="M464.5 374.9 L471 380.9 M467 374.7 L471.5 378.9 M464 377.9 L469 381.4 M471 374.9 L464.5 380.9" stroke="#6a6ae0" stroke-width="0.9"/><line x1="452" y1="384.9" x2="456" y2="384.9" stroke="#999" stroke-width="0.6" stroke-dasharray="0.8 0.8"/><rect x="449.5" y="382.9" width="4" height="4" fill="#fff" stroke="#aaa" stroke-width="0.5"/><circle cx="461" cy="384.59999999999997" r="2.5" fill="none" stroke="#666" stroke-width="0.8"/><rect x="463" y="385.9" width="1.5" height="1.8" fill="#d9452b"/><line x1="459" y1="391.9" x2="463" y2="391.9" stroke="#999" stroke-width="0.6" stroke-dasharray="0.8 0.8"/><path d="M464.5 388.9 L471 394.9 M467 388.7 L471.5 392.9 M464 391.9 L469 395.4 M471 388.9 L464.5 394.9" stroke="#6a6ae0" stroke-width="0.9"/><line x1="452" y1="398.9" x2="456" y2="398.9" stroke="#999" stroke-width="0.6" stroke-dasharray="0.8 0.8"/><rect x="449.5" y="396.9" width="4" height="4" fill="#fff" stroke="#aaa" stroke-width="0.5"/><path d="M458 401.4 L461 396.4 L464 401.4 Z" fill="#3a9a5a"/><circle cx="461" cy="397.9" r="1.6" fill="#e0a020"/><rect x="463" y="399.9" width="1.5" height="1.8" fill="#d9452b"/><line x1="459" y1="405.9" x2="463" y2="405.9" stroke="#999" stroke-width="0.6" stroke-dasharray="0.8 0.8"/><path d="M464.5 402.9 L471 408.9 M467 402.7 L471.5 406.9 M464 405.9 L469 409.4 M471 402.9 L464.5 408.9" stroke="#6a6ae0" stroke-width="0.9"/><line x1="452" y1="412.9" x2="456" y2="412.9" stroke="#999" stroke-width="0.6" stroke-dasharray="0.8 0.8"/><rect x="449.5" y="410.9" width="4" height="4" fill="#fff" stroke="#aaa" stroke-width="0.5"/><circle cx="461" cy="412.59999999999997" r="2.5" fill="none" stroke="#666" stroke-width="0.8"/><rect x="463" y="413.9" width="1.5" height="1.8" fill="#d9452b"/><line x1="459" y1="419.9" x2="463" y2="419.9" stroke="#999" stroke-width="0.6" stroke-dasharray="0.8 0.8"/><path d="M464.5 416.9 L471 422.9 M467 416.7 L471.5 420.9 M464 419.9 L469 423.4 M471 416.9 L464.5 422.9" stroke="#6a6ae0" stroke-width="0.9"/><line x1="452" y1="426.9" x2="456" y2="426.9" stroke="#999" stroke-width="0.6" stroke-dasharray="0.8 0.8"/><line x1="458" y1="429.4" x2="463" y2="424.4" stroke="#2a5ab0" stroke-width="1"/><circle cx="463" cy="424.4" r="1" fill="#d9452b"/><line x1="445.5" y1="184.8" x2="445.5" y2="426.8" stroke="#aaa" stroke-width="0.5" stroke-dasharray="0.8 0.8"/></svg>
<div class="a" style="left:578px;top:113px;width:2px;height:394px;background:#f7f7f7"></div>
<div class="a" style="left:1249px;top:113px;width:13px;height:394px;background:#f2f2f2"></div>
<div class="a" style="left:1250px;top:116px;width:8.5px;height:35.5px;background:#f4f4f4;border-right:1px solid #e0e0e0"></div>
<div class="a" style="left:1250px;top:158px;width:8.5px;height:28px;background:#f4f4f4;border-right:1px solid #e0e0e0"></div>
<div class="t" style="left:1251.5px;top:117px;font-size:4.6px;color:#444;writing-mode:vertical-rl;letter-spacing:-0.1px">Device Manager</div>
<div class="t" style="left:1251.5px;top:159.5px;font-size:4.6px;color:#444;writing-mode:vertical-rl;letter-spacing:-0.1px">Auto Inspect</div>
<div class="a" style="left:1259px;top:116px;width:2.6px;height:35.5px;background:#cfcfcf"></div>
<div class="a" style="left:1259px;top:158px;width:2.6px;height:28px;background:#cfcfcf"></div>
<div class="a" style="left:424px;top:507px;width:838px;height:12px;background:#2b559b"></div>
<div class="t" style="left:824.8px;top:511.1px;font-size:5px;color:#d5e0f0;letter-spacing:-0.3px">SECTION VIEW: OFF</div>
<div class="t" style="left:876.3px;top:511.1px;font-size:5px;color:#d5e0f0;letter-spacing:-0.3px">SELECTED ENTITIES: 0</div>
<div class="t" style="left:952.5px;top:511.1px;font-size:5px;color:#d5e0f0;letter-spacing:-0.3px">X:</div>
<div class="t" style="left:959.6px;top:511.1px;font-size:5px;color:#d5e0f0;letter-spacing:-0.3px">-4.15150</div>
<div class="t" style="left:992.4px;top:511.1px;font-size:5px;color:#d5e0f0;letter-spacing:-0.3px">Y:</div>
<div class="t" style="left:999.5px;top:511.1px;font-size:5px;color:#d5e0f0;letter-spacing:-0.3px">8.46265</div>
<div class="t" style="left:1031.8px;top:511.1px;font-size:5px;color:#d5e0f0;letter-spacing:-0.3px">Z:</div>
<div class="t" style="left:1039px;top:511.1px;font-size:5px;color:#d5e0f0;letter-spacing:-0.3px">-6.00000</div>
<div class="t" style="left:1068.5px;top:511.1px;font-size:5px;color:#d5e0f0;letter-spacing:-0.3px">3D</div>
<div class="t" style="left:1081px;top:511.1px;font-size:5px;color:#d5e0f0;letter-spacing:-0.3px">CPLANE: TOP</div>
<div class="t" style="left:1119.4px;top:511.1px;font-size:5px;color:#d5e0f0;letter-spacing:-0.3px">TPLANE: TOP</div>
<div class="t" style="left:1157px;top:511.1px;font-size:5px;color:#d5e0f0;letter-spacing:-0.3px">WCS: TOP</div>
<div class="a" style="left:1224px;top:508.5px;width:12.5px;height:9.5px;background:#3f7fd0"></div>
<div class="a" style="left:1062px;top:512.5px;width:1px;height:1px;background:#8aa4cc"></div>
<div class="a" style="left:1114px;top:512.5px;width:1px;height:1px;background:#8aa4cc"></div>
<div class="a" style="left:1151.6px;top:512.5px;width:1px;height:1px;background:#8aa4cc"></div>
<div class="a" style="left:1183.8px;top:512.5px;width:1px;height:1px;background:#8aa4cc"></div>
<svg class="a" style="left:0;top:0" width="1297" height="600" viewBox="0 0 1297 600"><circle cx="1194.6" cy="513" r="3.3" fill="none" stroke="#e8eef8" stroke-width="1"/><path d="M1191.3 513 H1197.8999999999999 M1194.6 509.7 V516.3" stroke="#e8eef8" stroke-width="0.7"/><circle cx="1206.2" cy="513" r="3.3" fill="none" stroke="#e8eef8" stroke-width="1"/><path d="M1202.9 513 H1209.5 M1206.2 509.7 V516.3" stroke="#e8eef8" stroke-width="0.7"/><circle cx="1217.8" cy="513" r="3.3" fill="none" stroke="#e8eef8" stroke-width="1"/><path d="M1214.5 513 H1221.1 M1217.8 509.7 V516.3" stroke="#e8eef8" stroke-width="0.7"/><defs><radialGradient id="sph" cx="0.38" cy="0.35" r="0.7"><stop offset="0" stop-color="#ffffff"/><stop offset="0.6" stop-color="#c8ccd2"/><stop offset="1" stop-color="#7a8290"/></radialGradient></defs><circle cx="1230.4" cy="513" r="3.5" fill="url(#sph)"/><circle cx="1242.9" cy="513" r="3.5" fill="url(#sph)"/><circle cx="1254.5" cy="513" r="3.5" fill="url(#sph)"/><path d="M1252 516 L1257 510" stroke="#555" stroke-width="1.2"/></svg>
<div class="a" style="left:580px;top:113.5px;width:669px;height:393.5px;background:linear-gradient(#000418 0px,#15243a 2px,#1a2a3e 8px,#394c62 126px,#6b7f94 296px,#889bb0 393px)"></div><div class="a" style="left:580px;top:115px;width:1px;height:392px;background:linear-gradient(rgba(120,140,160,0.2),rgba(170,185,200,0.6))"></div>
<div class="a" style="left:592px;top:124px;width:112px;height:61px;background:#c5d6e8;font-size:7.8px;color:#1c1c1c;line-height:1;-webkit-text-stroke:0.2px #1c1c1c;box-shadow:0 1px 0 rgba(0,5,25,0.45)"><div class="t" style="left:2px;top:2.2px">Circle1</div><div class="a" style="left:11px;top:10.5px;width:0.8px;height:50.5px;background:#e4edf6"></div><div class="a" style="left:46px;top:10.5px;width:0.8px;height:50.5px;background:#e4edf6"></div><div class="a" style="left:85px;top:10.5px;width:0.8px;height:50.5px;background:#e4edf6"></div><div class="a" style="left:0;top:10.5px;width:112.5px;height:0.8px;background:#d8e4f0"></div><div class="a" style="left:0;top:20.5px;width:112.5px;height:0.8px;background:#d8e4f0"></div><div class="a" style="left:0;top:30.3px;width:112.5px;height:0.8px;background:#d8e4f0"></div><div class="a" style="left:0;top:40px;width:112.5px;height:0.8px;background:#d8e4f0"></div><div class="a" style="left:0;top:49.8px;width:112.5px;height:0.8px;background:#d8e4f0"></div><div class="t" style="left:2px;top:12.5px">ID</div><div class="t" style="left:13.5px;top:12.5px">Report</div><div class="t" style="left:46px;top:12.5px;width:38.5px;text-align:right">Measured</div><div class="t" style="left:86.5px;top:12.5px">Result</div><div class="a" style="left:85.5px;top:21.3px;width:27px;height:9.0px;background:#00e600"></div><div class="t" style="left:2px;top:22.7px">1</div><div class="t" style="left:13.5px;top:22.7px">X</div><div class="t" style="left:46px;top:22.7px;width:38.5px;text-align:right">−11.5125</div><div class="t" style="left:85.5px;top:22.7px;width:27px;text-align:center">Pass</div><div class="a" style="left:85.5px;top:31.1px;width:27px;height:8.899999999999999px;background:#00e600"></div><div class="t" style="left:2px;top:32.5px">2</div><div class="t" style="left:13.5px;top:32.5px">Y</div><div class="t" style="left:46px;top:32.5px;width:38.5px;text-align:right">−0.1248</div><div class="t" style="left:85.5px;top:32.5px;width:27px;text-align:center">Pass</div><div class="a" style="left:85.5px;top:40.8px;width:27px;height:9.0px;background:#00e600"></div><div class="t" style="left:2px;top:42.2px">3</div><div class="t" style="left:13.5px;top:42.2px">Diameter</div><div class="t" style="left:46px;top:42.2px;width:38.5px;text-align:right">0.6257</div><div class="t" style="left:85.5px;top:42.2px;width:27px;text-align:center">Pass</div><div class="a" style="left:85.5px;top:50.599999999999994px;width:27px;height:10.399999999999999px;background:#00e600"></div><div class="t" style="left:2px;top:52.0px">4</div><div class="t" style="left:13.5px;top:52.0px">Position</div><div class="t" style="left:46px;top:52.0px;width:38.5px;text-align:right">0.0250</div><div class="t" style="left:85.5px;top:52.0px;width:27px;text-align:center">Pass</div></div>
<div class="a" style="left:869px;top:126px;width:112px;height:61px;background:#c5d6e8;font-size:7.8px;color:#1c1c1c;line-height:1;-webkit-text-stroke:0.2px #1c1c1c;box-shadow:0 1px 0 rgba(0,5,25,0.45)"><div class="t" style="left:2px;top:2.2px">Circle3</div><div class="a" style="left:11px;top:10.5px;width:0.8px;height:50.5px;background:#e4edf6"></div><div class="a" style="left:46px;top:10.5px;width:0.8px;height:50.5px;background:#e4edf6"></div><div class="a" style="left:85px;top:10.5px;width:0.8px;height:50.5px;background:#e4edf6"></div><div class="a" style="left:0;top:10.5px;width:112.5px;height:0.8px;background:#d8e4f0"></div><div class="a" style="left:0;top:20.5px;width:112.5px;height:0.8px;background:#d8e4f0"></div><div class="a" style="left:0;top:30.3px;width:112.5px;height:0.8px;background:#d8e4f0"></div><div class="a" style="left:0;top:40px;width:112.5px;height:0.8px;background:#d8e4f0"></div><div class="a" style="left:0;top:49.8px;width:112.5px;height:0.8px;background:#d8e4f0"></div><div class="t" style="left:2px;top:12.5px">ID</div><div class="t" style="left:13.5px;top:12.5px">Report</div><div class="t" style="left:46px;top:12.5px;width:38.5px;text-align:right">Measured</div><div class="t" style="left:86.5px;top:12.5px">Result</div><div class="a" style="left:85.5px;top:21.3px;width:27px;height:9.0px;background:#00e600"></div><div class="t" style="left:2px;top:22.7px">9</div><div class="t" style="left:13.5px;top:22.7px">X</div><div class="t" style="left:46px;top:22.7px;width:38.5px;text-align:right">−9.5003</div><div class="t" style="left:85.5px;top:22.7px;width:27px;text-align:center">Pass</div><div class="a" style="left:85.5px;top:31.1px;width:27px;height:8.899999999999999px;background:#00e600"></div><div class="t" style="left:2px;top:32.5px">10</div><div class="t" style="left:13.5px;top:32.5px">Y</div><div class="t" style="left:46px;top:32.5px;width:38.5px;text-align:right">−1.5004</div><div class="t" style="left:85.5px;top:32.5px;width:27px;text-align:center">Pass</div><div class="a" style="left:85.5px;top:40.8px;width:27px;height:9.0px;background:#00e600"></div><div class="t" style="left:2px;top:42.2px">11</div><div class="t" style="left:13.5px;top:42.2px">Diameter</div><div class="t" style="left:46px;top:42.2px;width:38.5px;text-align:right">3.4963</div><div class="t" style="left:85.5px;top:42.2px;width:27px;text-align:center">Pass</div><div class="a" style="left:85.5px;top:50.599999999999994px;width:27px;height:10.399999999999999px;background:#f2ee00"></div><div class="t" style="left:2px;top:52.0px">12</div><div class="t" style="left:13.5px;top:52.0px">Position</div><div class="t" style="left:46px;top:52.0px;width:38.5px;text-align:right">0.0009</div><div class="t" style="left:85.5px;top:52.0px;width:27px;text-align:center">Pass</div></div>
<div class="a" style="left:1092px;top:239.6px;width:112px;height:61px;background:#c5d6e8;font-size:7.8px;color:#1c1c1c;line-height:1;-webkit-text-stroke:0.2px #1c1c1c;box-shadow:0 1px 0 rgba(0,5,25,0.45)"><div class="t" style="left:2px;top:2.2px">Circle5</div><div class="a" style="left:11px;top:10.5px;width:0.8px;height:50.5px;background:#e4edf6"></div><div class="a" style="left:46px;top:10.5px;width:0.8px;height:50.5px;background:#e4edf6"></div><div class="a" style="left:85px;top:10.5px;width:0.8px;height:50.5px;background:#e4edf6"></div><div class="a" style="left:0;top:10.5px;width:112.5px;height:0.8px;background:#d8e4f0"></div><div class="a" style="left:0;top:20.5px;width:112.5px;height:0.8px;background:#d8e4f0"></div><div class="a" style="left:0;top:30.3px;width:112.5px;height:0.8px;background:#d8e4f0"></div><div class="a" style="left:0;top:40px;width:112.5px;height:0.8px;background:#d8e4f0"></div><div class="a" style="left:0;top:49.8px;width:112.5px;height:0.8px;background:#d8e4f0"></div><div class="t" style="left:2px;top:12.5px">ID</div><div class="t" style="left:13.5px;top:12.5px">Report</div><div class="t" style="left:46px;top:12.5px;width:38.5px;text-align:right">Measured</div><div class="t" style="left:86.5px;top:12.5px">Result</div><div class="a" style="left:85.5px;top:21.3px;width:27px;height:9.0px;background:#00e600"></div><div class="t" style="left:2px;top:22.7px">17</div><div class="t" style="left:13.5px;top:22.7px">X</div><div class="t" style="left:46px;top:22.7px;width:38.5px;text-align:right">−1.4871</div><div class="t" style="left:85.5px;top:22.7px;width:27px;text-align:center">Pass</div><div class="a" style="left:85.5px;top:31.1px;width:27px;height:8.899999999999999px;background:#00e600"></div><div class="t" style="left:2px;top:32.5px">18</div><div class="t" style="left:13.5px;top:32.5px">Y</div><div class="t" style="left:46px;top:32.5px;width:38.5px;text-align:right">−0.1253</div><div class="t" style="left:85.5px;top:32.5px;width:27px;text-align:center">Pass</div><div class="a" style="left:85.5px;top:40.8px;width:27px;height:9.0px;background:#00e600"></div><div class="t" style="left:2px;top:42.2px">19</div><div class="t" style="left:13.5px;top:42.2px">Diameter</div><div class="t" style="left:46px;top:42.2px;width:38.5px;text-align:right">0.6258</div><div class="t" style="left:85.5px;top:42.2px;width:27px;text-align:center">Pass</div><div class="a" style="left:85.5px;top:50.599999999999994px;width:27px;height:10.399999999999999px;background:#00e600"></div><div class="t" style="left:2px;top:52.0px">20</div><div class="t" style="left:13.5px;top:52.0px">Position</div><div class="t" style="left:46px;top:52.0px;width:38.5px;text-align:right">0.0258</div><div class="t" style="left:85.5px;top:52.0px;width:27px;text-align:center">Pass</div></div>
<div class="a" style="left:628px;top:330px;width:112px;height:61px;background:#c5d6e8;font-size:7.8px;color:#1c1c1c;line-height:1;-webkit-text-stroke:0.2px #1c1c1c;box-shadow:0 1px 0 rgba(0,5,25,0.45)"><div class="t" style="left:2px;top:2.2px">Circle2</div><div class="a" style="left:11px;top:10.5px;width:0.8px;height:50.5px;background:#e4edf6"></div><div class="a" style="left:46px;top:10.5px;width:0.8px;height:50.5px;background:#e4edf6"></div><div class="a" style="left:85px;top:10.5px;width:0.8px;height:50.5px;background:#e4edf6"></div><div class="a" style="left:0;top:10.5px;width:112.5px;height:0.8px;background:#d8e4f0"></div><div class="a" style="left:0;top:20.5px;width:112.5px;height:0.8px;background:#d8e4f0"></div><div class="a" style="left:0;top:30.3px;width:112.5px;height:0.8px;background:#d8e4f0"></div><div class="a" style="left:0;top:40px;width:112.5px;height:0.8px;background:#d8e4f0"></div><div class="a" style="left:0;top:49.8px;width:112.5px;height:0.8px;background:#d8e4f0"></div><div class="t" style="left:2px;top:12.5px">ID</div><div class="t" style="left:13.5px;top:12.5px">Report</div><div class="t" style="left:46px;top:12.5px;width:38.5px;text-align:right">Measured</div><div class="t" style="left:86.5px;top:12.5px">Result</div><div class="a" style="left:85.5px;top:21.3px;width:27px;height:9.0px;background:#00e600"></div><div class="t" style="left:2px;top:22.7px">5</div><div class="t" style="left:13.5px;top:22.7px">X</div><div class="t" style="left:46px;top:22.7px;width:38.5px;text-align:right">−11.5132</div><div class="t" style="left:85.5px;top:22.7px;width:27px;text-align:center">Pass</div><div class="a" style="left:85.5px;top:31.1px;width:27px;height:8.899999999999999px;background:#00e600"></div><div class="t" style="left:2px;top:32.5px">6</div><div class="t" style="left:13.5px;top:32.5px">Y</div><div class="t" style="left:46px;top:32.5px;width:38.5px;text-align:right">−2.8750</div><div class="t" style="left:85.5px;top:32.5px;width:27px;text-align:center">Pass</div><div class="a" style="left:85.5px;top:40.8px;width:27px;height:9.0px;background:#00e600"></div><div class="t" style="left:2px;top:42.2px">7</div><div class="t" style="left:13.5px;top:42.2px">Diameter</div><div class="t" style="left:46px;top:42.2px;width:38.5px;text-align:right">0.6256</div><div class="t" style="left:85.5px;top:42.2px;width:27px;text-align:center">Pass</div><div class="a" style="left:85.5px;top:50.599999999999994px;width:27px;height:10.399999999999999px;background:#00e600"></div><div class="t" style="left:2px;top:52.0px">8</div><div class="t" style="left:13.5px;top:52.0px">Position</div><div class="t" style="left:46px;top:52.0px;width:38.5px;text-align:right">0.0265</div><div class="t" style="left:85.5px;top:52.0px;width:27px;text-align:center">Pass</div></div>
<div class="a" style="left:853px;top:443px;width:112px;height:61px;background:#c5d6e8;font-size:7.8px;color:#1c1c1c;line-height:1;-webkit-text-stroke:0.2px #1c1c1c;box-shadow:0 1px 0 rgba(0,5,25,0.45)"><div class="t" style="left:2px;top:2.2px">Circle4</div><div class="a" style="left:11px;top:10.5px;width:0.8px;height:50.5px;background:#e4edf6"></div><div class="a" style="left:46px;top:10.5px;width:0.8px;height:50.5px;background:#e4edf6"></div><div class="a" style="left:85px;top:10.5px;width:0.8px;height:50.5px;background:#e4edf6"></div><div class="a" style="left:0;top:10.5px;width:112.5px;height:0.8px;background:#d8e4f0"></div><div class="a" style="left:0;top:20.5px;width:112.5px;height:0.8px;background:#d8e4f0"></div><div class="a" style="left:0;top:30.3px;width:112.5px;height:0.8px;background:#d8e4f0"></div><div class="a" style="left:0;top:40px;width:112.5px;height:0.8px;background:#d8e4f0"></div><div class="a" style="left:0;top:49.8px;width:112.5px;height:0.8px;background:#d8e4f0"></div><div class="t" style="left:2px;top:12.5px">ID</div><div class="t" style="left:13.5px;top:12.5px">Report</div><div class="t" style="left:46px;top:12.5px;width:38.5px;text-align:right">Measured</div><div class="t" style="left:86.5px;top:12.5px">Result</div><div class="a" style="left:85.5px;top:21.3px;width:27px;height:9.0px;background:#00e600"></div><div class="t" style="left:2px;top:22.7px">13</div><div class="t" style="left:13.5px;top:22.7px">X</div><div class="t" style="left:46px;top:22.7px;width:38.5px;text-align:right">−3.5002</div><div class="t" style="left:85.5px;top:22.7px;width:27px;text-align:center">Pass</div><div class="a" style="left:85.5px;top:31.1px;width:27px;height:8.899999999999999px;background:#00e600"></div><div class="t" style="left:2px;top:32.5px">14</div><div class="t" style="left:13.5px;top:32.5px">Y</div><div class="t" style="left:46px;top:32.5px;width:38.5px;text-align:right">−1.5003</div><div class="t" style="left:85.5px;top:32.5px;width:27px;text-align:center">Pass</div><div class="a" style="left:85.5px;top:40.8px;width:27px;height:9.0px;background:#00e600"></div><div class="t" style="left:2px;top:42.2px">15</div><div class="t" style="left:13.5px;top:42.2px">Diameter</div><div class="t" style="left:46px;top:42.2px;width:38.5px;text-align:right">3.4961</div><div class="t" style="left:85.5px;top:42.2px;width:27px;text-align:center">Pass</div><div class="a" style="left:85.5px;top:50.599999999999994px;width:27px;height:10.399999999999999px;background:#f2ee00"></div><div class="t" style="left:2px;top:52.0px">16</div><div class="t" style="left:13.5px;top:52.0px">Position</div><div class="t" style="left:46px;top:52.0px;width:38.5px;text-align:right">0.0008</div><div class="t" style="left:85.5px;top:52.0px;width:27px;text-align:center">Pass</div></div>
<div class="a" style="left:1052.5px;top:443px;width:112px;height:61px;background:#c5d6e8;font-size:7.8px;color:#1c1c1c;line-height:1;-webkit-text-stroke:0.2px #1c1c1c;box-shadow:0 1px 0 rgba(0,5,25,0.45)"><div class="t" style="left:2px;top:2.2px">Circle6</div><div class="a" style="left:11px;top:10.5px;width:0.8px;height:50.5px;background:#e4edf6"></div><div class="a" style="left:46px;top:10.5px;width:0.8px;height:50.5px;background:#e4edf6"></div><div class="a" style="left:85px;top:10.5px;width:0.8px;height:50.5px;background:#e4edf6"></div><div class="a" style="left:0;top:10.5px;width:112.5px;height:0.8px;background:#d8e4f0"></div><div class="a" style="left:0;top:20.5px;width:112.5px;height:0.8px;background:#d8e4f0"></div><div class="a" style="left:0;top:30.3px;width:112.5px;height:0.8px;background:#d8e4f0"></div><div class="a" style="left:0;top:40px;width:112.5px;height:0.8px;background:#d8e4f0"></div><div class="a" style="left:0;top:49.8px;width:112.5px;height:0.8px;background:#d8e4f0"></div><div class="t" style="left:2px;top:12.5px">ID</div><div class="t" style="left:13.5px;top:12.5px">Report</div><div class="t" style="left:46px;top:12.5px;width:38.5px;text-align:right">Measured</div><div class="t" style="left:86.5px;top:12.5px">Result</div><div class="a" style="left:85.5px;top:21.3px;width:27px;height:9.0px;background:#00e600"></div><div class="t" style="left:2px;top:22.7px">21</div><div class="t" style="left:13.5px;top:22.7px">X</div><div class="t" style="left:46px;top:22.7px;width:38.5px;text-align:right">−1.4884</div><div class="t" style="left:85.5px;top:22.7px;width:27px;text-align:center">Pass</div><div class="a" style="left:85.5px;top:31.1px;width:27px;height:8.899999999999999px;background:#00e600"></div><div class="t" style="left:2px;top:32.5px">22</div><div class="t" style="left:13.5px;top:32.5px">Y</div><div class="t" style="left:46px;top:32.5px;width:38.5px;text-align:right">−2.8756</div><div class="t" style="left:85.5px;top:32.5px;width:27px;text-align:center">Pass</div><div class="a" style="left:85.5px;top:40.8px;width:27px;height:9.0px;background:#00e600"></div><div class="t" style="left:2px;top:42.2px">23</div><div class="t" style="left:13.5px;top:42.2px">Diameter</div><div class="t" style="left:46px;top:42.2px;width:38.5px;text-align:right">0.6257</div><div class="t" style="left:85.5px;top:42.2px;width:27px;text-align:center">Pass</div><div class="a" style="left:85.5px;top:50.599999999999994px;width:27px;height:10.399999999999999px;background:#00e600"></div><div class="t" style="left:2px;top:52.0px">24</div><div class="t" style="left:13.5px;top:52.0px">Position</div><div class="t" style="left:46px;top:52.0px;width:38.5px;text-align:right">0.0233</div><div class="t" style="left:85.5px;top:52.0px;width:27px;text-align:center">Pass</div></div>
<div class="a" style="left:1232px;top:146.00px;width:13px;height:15px;background:#0000ff;box-shadow:inset 0 -0.6px 0 rgba(0,0,0,.25)"></div>
<div class="a" style="left:1232px;top:160.95px;width:13px;height:15px;background:#0a3cff;box-shadow:inset 0 -0.6px 0 rgba(0,0,0,.25)"></div>
<div class="a" style="left:1232px;top:175.90px;width:13px;height:15px;background:#1a6dff;box-shadow:inset 0 -0.6px 0 rgba(0,0,0,.25)"></div>
<div class="a" style="left:1232px;top:190.85px;width:13px;height:15px;background:#1890f0;box-shadow:inset 0 -0.6px 0 rgba(0,0,0,.25)"></div>
<div class="a" style="left:1232px;top:205.80px;width:13px;height:15px;background:#10c0ff;box-shadow:inset 0 -0.6px 0 rgba(0,0,0,.25)"></div>
<div class="a" style="left:1232px;top:220.75px;width:13px;height:15px;background:#00ffff;box-shadow:inset 0 -0.6px 0 rgba(0,0,0,.25)"></div>
<div class="a" style="left:1232px;top:235.70px;width:13px;height:15px;background:#00f0c0;box-shadow:inset 0 -0.6px 0 rgba(0,0,0,.25)"></div>
<div class="a" style="left:1232px;top:250.65px;width:13px;height:15px;background:#00f090;box-shadow:inset 0 -0.6px 0 rgba(0,0,0,.25)"></div>
<div class="a" style="left:1232px;top:265.60px;width:13px;height:15px;background:#00f070;box-shadow:inset 0 -0.6px 0 rgba(0,0,0,.25)"></div>
<div class="a" style="left:1232px;top:280.55px;width:13px;height:15px;background:#00f050;box-shadow:inset 0 -0.6px 0 rgba(0,0,0,.25)"></div>
<div class="a" style="left:1232px;top:295.50px;width:13px;height:15px;background:#00ff20;box-shadow:inset 0 -0.6px 0 rgba(0,0,0,.25)"></div>
<div class="a" style="left:1232px;top:310.45px;width:13px;height:15px;background:#00ff00;box-shadow:inset 0 -0.6px 0 rgba(0,0,0,.25)"></div>
<div class="a" style="left:1232px;top:325.40px;width:13px;height:15px;background:#30e010;box-shadow:inset 0 -0.6px 0 rgba(0,0,0,.25)"></div>
<div class="a" style="left:1232px;top:340.35px;width:13px;height:15px;background:#60e800;box-shadow:inset 0 -0.6px 0 rgba(0,0,0,.25)"></div>
<div class="a" style="left:1232px;top:355.30px;width:13px;height:15px;background:#a0f000;box-shadow:inset 0 -0.6px 0 rgba(0,0,0,.25)"></div>
<div class="a" style="left:1232px;top:370.25px;width:13px;height:15px;background:#c8f000;box-shadow:inset 0 -0.6px 0 rgba(0,0,0,.25)"></div>
<div class="a" style="left:1232px;top:385.20px;width:13px;height:15px;background:#ffff00;box-shadow:inset 0 -0.6px 0 rgba(0,0,0,.25)"></div>
<div class="a" style="left:1232px;top:400.15px;width:13px;height:15px;background:#ffc800;box-shadow:inset 0 -0.6px 0 rgba(0,0,0,.25)"></div>
<div class="a" style="left:1232px;top:415.10px;width:13px;height:15px;background:#ff9600;box-shadow:inset 0 -0.6px 0 rgba(0,0,0,.25)"></div>
<div class="a" style="left:1232px;top:430.05px;width:13px;height:15px;background:#ff6400;box-shadow:inset 0 -0.6px 0 rgba(0,0,0,.25)"></div>
<div class="a" style="left:1232px;top:445.00px;width:13px;height:15px;background:#ff3200;box-shadow:inset 0 -0.6px 0 rgba(0,0,0,.25)"></div>
<div class="a" style="left:1232px;top:459.95px;width:13px;height:15px;background:#ff0000;box-shadow:inset 0 -0.6px 0 rgba(0,0,0,.25)"></div>
<div class="t" style="left:1190px;top:157.80px;width:41px;text-align:right;font-size:6.9px;color:#e8eef4">0.010-</div>
<div class="t" style="left:1190px;top:172.75px;width:41px;text-align:right;font-size:6.9px;color:#e8eef4">0.009-</div>
<div class="t" style="left:1190px;top:187.70px;width:41px;text-align:right;font-size:6.9px;color:#e8eef4">0.008-</div>
<div class="t" style="left:1190px;top:202.65px;width:41px;text-align:right;font-size:6.9px;color:#e8eef4">0.007-</div>
<div class="t" style="left:1190px;top:217.60px;width:41px;text-align:right;font-size:6.9px;color:#e8eef4">0.006-</div>
<div class="t" style="left:1190px;top:232.55px;width:41px;text-align:right;font-size:6.9px;color:#e8eef4">0.005-</div>
<div class="t" style="left:1190px;top:247.50px;width:41px;text-align:right;font-size:6.9px;color:#e8eef4">0.004-</div>
<div class="t" style="left:1190px;top:262.45px;width:41px;text-align:right;font-size:6.9px;color:#e8eef4">0.003-</div>
<div class="t" style="left:1190px;top:277.40px;width:41px;text-align:right;font-size:6.9px;color:#e8eef4">0.002-</div>
<div class="t" style="left:1190px;top:292.35px;width:41px;text-align:right;font-size:6.9px;color:#e8eef4">0.001-</div>
<div class="t" style="left:1190px;top:307.30px;width:41px;text-align:right;font-size:6.9px;color:#e8eef4">0.000-</div>
<div class="t" style="left:1190px;top:322.25px;width:41px;text-align:right;font-size:6.9px;color:#e8eef4">−0.001-</div>
<div class="t" style="left:1190px;top:337.20px;width:41px;text-align:right;font-size:6.9px;color:#e8eef4">−0.002-</div>
<div class="t" style="left:1190px;top:352.15px;width:41px;text-align:right;font-size:6.9px;color:#e8eef4">−0.003-</div>
<div class="t" style="left:1190px;top:367.10px;width:41px;text-align:right;font-size:6.9px;color:#e8eef4">−0.004-</div>
<div class="t" style="left:1190px;top:382.05px;width:41px;text-align:right;font-size:6.9px;color:#e8eef4">−0.005-</div>
<div class="t" style="left:1190px;top:397.00px;width:41px;text-align:right;font-size:6.9px;color:#e8eef4">−0.006-</div>
<div class="t" style="left:1190px;top:411.95px;width:41px;text-align:right;font-size:6.9px;color:#e8eef4">−0.007-</div>
<div class="t" style="left:1190px;top:426.90px;width:41px;text-align:right;font-size:6.9px;color:#e8eef4">−0.008-</div>
<div class="t" style="left:1190px;top:441.85px;width:41px;text-align:right;font-size:6.9px;color:#e8eef4">−0.009-</div>
<div class="t" style="left:1190px;top:456.80px;width:41px;text-align:right;font-size:6.9px;color:#e8eef4">−0.010-</div>
<div class="a" style="left:1197.3px;top:492.7px;width:42px;height:10px;border-left:1px solid #e6ebf0;border-right:1px solid #e6ebf0"></div><div class="a" style="left:1198px;top:497.6px;width:41px;height:0.9px;background:#e6ebf0"></div>
<div class="t" style="left:1196px;top:491.8px;width:46px;text-align:center;font-size:6px;color:#f4f6fa;font-weight:bold">1.2525 in</div><div class="t" style="left:1196px;top:498px;width:46px;text-align:center;font-size:5.6px;color:#f4f6fa;font-weight:bold">Inch</div>
<svg class="a" style="left:0;top:0" width="1297" height="600" viewBox="0 0 1297 600">
<defs>
<linearGradient id="vg" gradientUnits="userSpaceOnUse" x1="0" y1="113.5" x2="0" y2="507">
<stop offset="0" stop-color="#000418"/><stop offset="0.005" stop-color="#15243a"/><stop offset="0.02" stop-color="#1a2a3e"/><stop offset="0.32" stop-color="#394c62"/><stop offset="0.752" stop-color="#6b7f94"/><stop offset="1" stop-color="#889bb0"/></linearGradient>
<filter id="bl" x="-50%" y="-50%" width="200%" height="200%"><feGaussianBlur stdDeviation="5"/></filter>
<filter id="bl2" x="-50%" y="-50%" width="200%" height="200%"><feGaussianBlur stdDeviation="3"/></filter>
<clipPath id="cw"><path d="M705.5 206.0 L698.8 224.8 L697.2 235.3 L697.3 243.2 L699.1 252.4 L701.9 259.9 L706.5 266.1 L712.8 271.7 L719.2 274.5 L720.6 276.0 L721.6 279.8 L721.1 285.9 L721.3 289.8 L722.8 294.5 L725.7 298.9 L728.8 301.4 L733.1 302.9 L748.8 303.2 L752.7 304.3 L767.3 320.6 L771.6 324.8 L779.0 330.4 L787.4 334.8 L798.6 338.6 L810.4 341.4 L816.1 342.3 L828.4 343.2 L832.8 344.1 L836.0 347.6 L843.2 357.4 L856.3 372.2 L867.4 381.9 L872.3 385.3 L877.5 388.0 L882.6 389.6 L890.1 390.4 L902.0 390.5 L925.7 389.0 L933.8 389.5 L939.2 392.6 L946.4 398.8 L961.6 410.2 L967.6 414.1 L973.2 417.0 L981.9 420.1 L993.2 422.5 L999.1 422.8 L1012.2 422.0 L1018.1 422.2 L1020.3 424.1 L1025.7 431.8 L1029.7 435.9 L1032.2 437.9 L1035.1 439.4 L1038.1 440.3 L1044.8 440.8 L1048.1 440.2 L1050.0 439.4 L1052.5 437.7 L1056.4 434.1 L1060.5 431.5 L1064.3 431.4 L1081.0 433.4 L1091.2 433.0 L1094.9 432.3 L1100.3 430.3 L1106.0 427.4 L1109.7 425.0 L1113.2 422.2 L1117.9 417.7 L1122.0 412.7 L1124.1 408.9 L1125.7 404.5 L1127.1 394.6 L1128.5 388.1 L1129.4 386.0 L1130.6 384.9 L1135.4 383.3 L1138.4 381.5 L1142.9 376.8 L1145.6 372.2 L1146.5 368.7 L1146.7 364.7 L1145.0 348.7 L1143.3 344.0 L1139.6 340.6 L1134.6 338.2 L1129.7 337.2 L1126.3 337.7 L1112.2 341.4 L1108.4 341.5 L1107.3 341.0 L1105.7 338.9 L1103.6 332.3 L1102.0 329.3 L1098.7 325.5 L1096.1 323.2 L1092.9 321.3 L1088.8 320.0 L1075.1 319.5 L1070.0 318.0 L1066.1 314.7 L1059.3 305.4 L1055.0 301.0 L1049.3 297.1 L1039.4 291.4 L1030.0 287.0 L1024.6 285.2 L994.9 280.1 L989.6 278.3 L987.5 276.9 L986.2 275.3 L983.1 270.6 L978.6 261.7 L974.4 256.2 L968.8 250.7 L964.5 247.1 L960.0 244.0 L955.3 241.3 L947.7 237.9 L937.5 234.2 L930.0 232.0 L922.5 230.4 L912.2 229.3 L890.6 229.2 L886.0 228.5 L882.4 226.4 L878.2 222.3 L868.3 214.2 L859.8 209.2 L847.8 204.6 L835.3 201.1 L827.2 199.6 L809.2 197.8 L805.2 196.7 L801.5 194.3 L797.1 189.8 L792.1 183.7 L788.6 182.0 L784.4 181.1 L780.0 181.0 L768.4 184.0 L764.5 183.4 L761.4 181.5 L758.4 178.1 L756.4 171.2 L752.8 162.9 L751.0 161.0 L747.1 158.9 L743.9 157.9 L740.6 157.5 L735.6 158.1 L732.1 159.3 L728.7 161.0 L725.0 164.2 L722.6 168.5 L717.7 181.9 L716.5 187.1 L716.7 192.0 L714.0 194.0 L708.3 201.1 L705.5 206.0Z"/></clipPath>
<clipPath id="ci"><path d="M723.2 192.1 L716.4 196.4 L712.2 201.5 L708.6 207.4 L707.0 212.1 L705.9 217.2 L705.0 223.4 L705.0 228.7 L706.7 238.3 L708.3 243.0 L709.8 245.6 L712.7 249.3 L717.1 253.3 L724.3 256.7 L726.6 258.9 L728.0 260.9 L728.9 263.3 L729.5 266.8 L729.0 276.1 L730.1 279.2 L731.9 282.0 L733.5 283.3 L735.8 284.1 L750.9 284.3 L754.8 285.1 L757.5 286.3 L764.0 292.8 L773.5 303.8 L777.3 307.5 L783.9 312.5 L791.3 316.4 L801.9 319.9 L813.1 322.7 L818.3 323.4 L830.8 324.4 L835.3 325.2 L837.5 326.0 L841.6 329.9 L849.6 340.8 L860.4 353.2 L870.6 362.6 L874.9 365.9 L879.2 368.6 L885.3 370.8 L891.8 371.5 L903.4 371.6 L927.2 370.1 L934.0 370.3 L937.3 370.9 L943.3 374.1 L951.9 381.3 L963.9 390.4 L969.5 394.3 L974.8 397.5 L980.0 399.7 L985.2 401.5 L995.4 403.6 L1000.5 403.9 L1015.4 403.1 L1021.7 403.6 L1023.7 404.7 L1025.9 406.6 L1031.1 414.0 L1035.6 418.7 L1038.9 420.9 L1042.3 421.8 L1045.9 421.9 L1048.4 421.3 L1057.3 414.2 L1060.9 412.7 L1066.3 412.5 L1085.1 414.6 L1091.8 414.2 L1097.6 412.6 L1104.2 409.4 L1110.5 404.9 L1115.9 399.5 L1119.9 393.6 L1121.3 388.7 L1122.3 381.1 L1123.6 375.2 L1125.2 370.5 L1119.8 369.2 L1115.0 367.0 L1110.9 364.0 L1107.7 360.5 L1105.8 356.7 L1105.0 352.6 L1105.5 348.4 L1107.0 344.6 L1105.2 343.6 L1103.5 341.9 L1102.5 340.0 L1099.9 332.3 L1095.2 326.9 L1091.4 324.4 L1088.3 323.4 L1074.8 322.9 L1071.4 322.2 L1068.3 321.0 L1065.8 319.2 L1063.6 317.0 L1056.7 307.5 L1052.9 303.6 L1047.5 300.0 L1041.2 296.2 L1028.8 290.2 L1021.3 287.9 L994.2 283.4 L987.8 281.3 L985.4 279.5 L983.4 277.3 L980.1 272.2 L975.7 263.4 L971.9 258.6 L966.5 253.3 L962.4 249.8 L953.7 244.3 L946.4 241.0 L936.5 237.4 L929.2 235.3 L921.9 233.8 L912.1 232.7 L888.9 232.5 L884.7 231.7 L880.3 229.1 L875.9 224.9 L866.3 216.9 L858.3 212.3 L846.7 207.8 L834.5 204.4 L826.7 202.9 L808.8 201.2 L804.1 199.9 L801.8 198.8 L799.1 196.7 L794.4 191.9 L790.0 186.4 L786.5 184.9 L782.8 184.4 L779.1 184.5 L770.7 187.0 L766.6 187.4 L761.8 185.9 L757.4 182.4 L754.9 185.7 L751.9 188.5 L748.6 190.6 L744.5 192.2 L739.5 193.0 L734.5 192.5 L729.8 190.8 L725.5 188.0 L724.5 190.5 L723.2 192.1Z"/></clipPath>
</defs>
<line x1="704" y1="184" x2="783" y2="208" stroke="#d8dde2" stroke-width="1"/>
<path d="M705.5 206.0 L698.8 224.8 L697.2 235.3 L697.3 243.2 L699.1 252.4 L701.9 259.9 L706.5 266.1 L712.8 271.7 L719.2 274.5 L720.6 276.0 L721.6 279.8 L721.1 285.9 L721.3 289.8 L722.8 294.5 L725.7 298.9 L728.8 301.4 L733.1 302.9 L748.8 303.2 L752.7 304.3 L767.3 320.6 L771.6 324.8 L779.0 330.4 L787.4 334.8 L798.6 338.6 L810.4 341.4 L816.1 342.3 L828.4 343.2 L832.8 344.1 L836.0 347.6 L843.2 357.4 L856.3 372.2 L867.4 381.9 L872.3 385.3 L877.5 388.0 L882.6 389.6 L890.1 390.4 L902.0 390.5 L925.7 389.0 L933.8 389.5 L939.2 392.6 L946.4 398.8 L961.6 410.2 L967.6 414.1 L973.2 417.0 L981.9 420.1 L993.2 422.5 L999.1 422.8 L1012.2 422.0 L1018.1 422.2 L1020.3 424.1 L1025.7 431.8 L1029.7 435.9 L1032.2 437.9 L1035.1 439.4 L1038.1 440.3 L1044.8 440.8 L1048.1 440.2 L1050.0 439.4 L1052.5 437.7 L1056.4 434.1 L1060.5 431.5 L1064.3 431.4 L1081.0 433.4 L1091.2 433.0 L1094.9 432.3 L1100.3 430.3 L1106.0 427.4 L1109.7 425.0 L1113.2 422.2 L1117.9 417.7 L1122.0 412.7 L1124.1 408.9 L1125.7 404.5 L1127.1 394.6 L1128.5 388.1 L1129.4 386.0 L1130.6 384.9 L1135.4 383.3 L1138.4 381.5 L1142.9 376.8 L1145.6 372.2 L1146.5 368.7 L1146.7 364.7 L1145.0 348.7 L1143.3 344.0 L1139.6 340.6 L1134.6 338.2 L1129.7 337.2 L1126.3 337.7 L1112.2 341.4 L1108.4 341.5 L1107.3 341.0 L1105.7 338.9 L1103.6 332.3 L1102.0 329.3 L1098.7 325.5 L1096.1 323.2 L1092.9 321.3 L1088.8 320.0 L1075.1 319.5 L1070.0 318.0 L1066.1 314.7 L1059.3 305.4 L1055.0 301.0 L1049.3 297.1 L1039.4 291.4 L1030.0 287.0 L1024.6 285.2 L994.9 280.1 L989.6 278.3 L987.5 276.9 L986.2 275.3 L983.1 270.6 L978.6 261.7 L974.4 256.2 L968.8 250.7 L964.5 247.1 L960.0 244.0 L955.3 241.3 L947.7 237.9 L937.5 234.2 L930.0 232.0 L922.5 230.4 L912.2 229.3 L890.6 229.2 L886.0 228.5 L882.4 226.4 L878.2 222.3 L868.3 214.2 L859.8 209.2 L847.8 204.6 L835.3 201.1 L827.2 199.6 L809.2 197.8 L805.2 196.7 L801.5 194.3 L797.1 189.8 L792.1 183.7 L788.6 182.0 L784.4 181.1 L780.0 181.0 L768.4 184.0 L764.5 183.4 L761.4 181.5 L758.4 178.1 L756.4 171.2 L752.8 162.9 L751.0 161.0 L747.1 158.9 L743.9 157.9 L740.6 157.5 L735.6 158.1 L732.1 159.3 L728.7 161.0 L725.0 164.2 L722.6 168.5 L717.7 181.9 L716.5 187.1 L716.7 192.0 L714.0 194.0 L708.3 201.1 L705.5 206.0Z" fill="#2ee82a"/>
<g clip-path="url(#cw)"><g filter="url(#bl)">
<circle cx="702" cy="225" r="9" fill="#30f0a0"/>
<circle cx="716" cy="262" r="7" fill="#1040ff"/>
<circle cx="720" cy="285" r="6" fill="#1060ff"/>
<circle cx="726" cy="298" r="6" fill="#10d0e0"/>
<circle cx="752" cy="300" r="8" fill="#d8f000"/>
<circle cx="740" cy="302" r="6" fill="#60f040"/>
<circle cx="790" cy="325" r="10" fill="#70f020"/>
<circle cx="850" cy="362" r="8" fill="#50f020"/>
<circle cx="905" cy="392" r="10" fill="#90f010"/>
<circle cx="960" cy="408" r="9" fill="#60f020"/>
<circle cx="1000" cy="418" r="8" fill="#a0f000"/>
<circle cx="1118" cy="420" r="8" fill="#20f0c0"/>
<circle cx="1012" cy="415" r="9" fill="#c0f000"/>
<circle cx="1046" cy="436" r="8" fill="#0a30ff"/>
<circle cx="1064" cy="433" r="6" fill="#10e0f0"/>
<circle cx="1085" cy="430" r="10" fill="#20f0a0"/>
<circle cx="1130" cy="395" r="12" fill="#20f0b0"/>
<circle cx="1145" cy="360" r="6" fill="#30e0c0"/>
</g></g>
<path d="M722.0 188.0 L720.6 189.9 L716.2 192.2 L714.0 194.0 L709.5 199.5 L705.5 206.0 L703.7 211.2 L702.5 216.6 L701.7 223.1 L701.6 228.9 L703.4 239.1 L705.2 244.4 L706.9 247.5 L710.2 251.6 L715.0 256.0 L717.2 257.4 L722.2 259.4 L725.0 262.5 L726.1 267.2 L725.7 276.6 L727.0 280.6 L729.4 284.3 L731.8 286.3 L735.2 287.5 L750.6 287.7 L753.9 288.4 L755.8 289.2 L775.0 310.0 L782.0 315.4 L790.0 319.5 L801.0 323.2 L812.5 326.0 L817.9 326.8 L830.2 327.7 L835.7 328.9 L838.9 332.0 L845.6 341.2 L850.3 346.9 L859.9 357.6 L870.7 367.0 L875.3 370.2 L880.0 372.7 L884.6 374.1 L891.7 374.9 L903.4 375.0 L927.1 373.5 L932.2 373.6 L936.1 374.1 L942.6 377.7 L949.8 383.9 L964.8 395.2 L970.5 399.0 L976.0 401.8 L984.2 404.7 L995.0 407.0 L1000.5 407.3 L1013.6 406.5 L1020.5 406.8 L1023.4 408.8 L1029.4 417.2 L1035.4 422.9 L1037.7 424.1 L1040.3 424.9 L1046.2 425.3 L1050.0 424.3 L1056.1 419.3 L1059.7 416.7 L1061.3 416.1 L1066.0 415.9 L1082.6 417.9 L1090.7 417.8 L1093.9 417.3 L1098.8 415.8 L1104.2 413.3 L1107.7 411.2 L1112.7 407.5 L1117.1 403.2 L1121.0 398.4 L1123.0 395.0 L1124.3 391.3 L1125.7 381.6 L1127.1 374.8 L1128.3 371.9 L1130.9 369.7 L1135.8 368.0 L1138.0 366.7 L1142.0 362.6 L1144.3 358.7 L1145.0 355.8 L1145.2 352.3 L1144.6 347.0 L1143.3 344.0 L1139.6 340.6 L1134.6 338.2 L1129.7 337.2 L1126.3 337.7 L1112.2 341.4 L1108.4 341.5 L1107.3 341.0 L1105.7 338.9 L1103.6 332.3 L1102.0 329.3 L1098.7 325.5 L1096.1 323.2 L1092.9 321.3 L1088.8 320.0 L1075.1 319.5 L1070.0 318.0 L1066.1 314.7 L1059.3 305.4 L1055.0 301.0 L1049.3 297.1 L1039.4 291.4 L1030.0 287.0 L1024.6 285.2 L994.9 280.1 L989.6 278.3 L986.8 276.2 L984.0 272.0 L977.4 259.8 L970.8 252.5 L964.5 247.1 L960.0 244.0 L955.3 241.3 L947.7 237.9 L932.5 232.7 L920.0 230.0 L909.6 229.2 L890.6 229.2 L886.0 228.5 L882.4 226.4 L878.2 222.3 L866.7 213.1 L861.6 210.1 L854.2 206.8 L843.0 203.1 L832.7 200.5 L827.2 199.6 L811.8 198.2 L805.2 196.7 L801.5 194.3 L797.1 189.8 L793.0 184.6 L789.8 182.4 L785.9 181.3 L780.0 181.0 L768.4 184.0 L764.5 183.4 L761.4 181.5 L758.4 178.1 L756.4 171.2 L752.8 162.9 L749.8 160.2 L743.9 157.9 L739.0 157.5 L733.8 158.6 L728.7 161.0 L725.0 164.2 L722.6 168.5 L721.0 175.0 L721.0 178.3 L722.2 185.2 L722.0 188.0Z" fill="#616161" stroke="#2fd23a" stroke-width="1.1"/>
<path d="M723.2 192.1 L716.4 196.4 L712.2 201.5 L708.6 207.4 L707.0 212.1 L705.9 217.2 L705.0 223.4 L705.0 228.7 L706.7 238.3 L708.3 243.0 L709.8 245.6 L712.7 249.3 L717.1 253.3 L724.3 256.7 L726.6 258.9 L728.0 260.9 L728.9 263.3 L729.5 266.8 L729.0 276.1 L730.1 279.2 L731.9 282.0 L733.5 283.3 L735.8 284.1 L750.9 284.3 L754.8 285.1 L757.5 286.3 L764.0 292.8 L773.5 303.8 L777.3 307.5 L783.9 312.5 L791.3 316.4 L801.9 319.9 L813.1 322.7 L818.3 323.4 L830.8 324.4 L835.3 325.2 L837.5 326.0 L841.6 329.9 L849.6 340.8 L860.4 353.2 L870.6 362.6 L874.9 365.9 L879.2 368.6 L885.3 370.8 L891.8 371.5 L903.4 371.6 L927.2 370.1 L934.0 370.3 L937.3 370.9 L943.3 374.1 L951.9 381.3 L963.9 390.4 L969.5 394.3 L974.8 397.5 L980.0 399.7 L985.2 401.5 L995.4 403.6 L1000.5 403.9 L1015.4 403.1 L1021.7 403.6 L1023.7 404.7 L1025.9 406.6 L1031.1 414.0 L1035.6 418.7 L1038.9 420.9 L1042.3 421.8 L1045.9 421.9 L1048.4 421.3 L1057.3 414.2 L1060.9 412.7 L1066.3 412.5 L1085.1 414.6 L1091.8 414.2 L1097.6 412.6 L1104.2 409.4 L1110.5 404.9 L1115.9 399.5 L1119.9 393.6 L1121.3 388.7 L1122.3 381.1 L1123.6 375.2 L1125.2 370.5 L1119.8 369.2 L1115.0 367.0 L1110.9 364.0 L1107.7 360.5 L1105.8 356.7 L1105.0 352.6 L1105.5 348.4 L1107.0 344.6 L1105.2 343.6 L1103.5 341.9 L1102.5 340.0 L1099.9 332.3 L1095.2 326.9 L1091.4 324.4 L1088.3 323.4 L1074.8 322.9 L1071.4 322.2 L1068.3 321.0 L1065.8 319.2 L1063.6 317.0 L1056.7 307.5 L1052.9 303.6 L1047.5 300.0 L1041.2 296.2 L1028.8 290.2 L1021.3 287.9 L994.2 283.4 L987.8 281.3 L985.4 279.5 L983.4 277.3 L980.1 272.2 L975.7 263.4 L971.9 258.6 L966.5 253.3 L962.4 249.8 L953.7 244.3 L946.4 241.0 L936.5 237.4 L929.2 235.3 L921.9 233.8 L912.1 232.7 L888.9 232.5 L884.7 231.7 L880.3 229.1 L875.9 224.9 L866.3 216.9 L858.3 212.3 L846.7 207.8 L834.5 204.4 L826.7 202.9 L808.8 201.2 L804.1 199.9 L801.8 198.8 L799.1 196.7 L794.4 191.9 L790.0 186.4 L786.5 184.9 L782.8 184.4 L779.1 184.5 L770.7 187.0 L766.6 187.4 L761.8 185.9 L757.4 182.4 L754.9 185.7 L751.9 188.5 L748.6 190.6 L744.5 192.2 L739.5 193.0 L734.5 192.5 L729.8 190.8 L725.5 188.0 L724.5 190.5 L723.2 192.1Z" fill="#f4f000" stroke="#262626" stroke-width="0.7"/>
<g clip-path="url(#ci)"><g filter="url(#bl)">
<circle cx="708" cy="215" r="10" fill="#c8f000"/>
<circle cx="707" cy="240" r="10" fill="#60f030"/>
<circle cx="712" cy="255" r="6" fill="#20e080"/>
<circle cx="745" cy="197" r="6" fill="#ffd000"/>
<circle cx="760" cy="196" r="6" fill="#ff9000"/>
<circle cx="772" cy="194" r="8" fill="#ff0000"/>
<circle cx="786" cy="190" r="8" fill="#ff0000"/>
<circle cx="799" cy="198" r="5" fill="#ff5000"/>
<circle cx="730" cy="200" r="5" fill="#f0f000"/>
<circle cx="816" cy="206" r="8" fill="#20e020"/>
<circle cx="835" cy="208" r="6" fill="#b0f000"/>
<circle cx="1062" cy="312" r="9" fill="#a0f010"/>
<circle cx="878" cy="230" r="7" fill="#b0f000"/>
<circle cx="1072" cy="323" r="6" fill="#40e030"/>
<circle cx="1090" cy="328" r="5" fill="#ff8000"/>
<circle cx="1097" cy="348" r="8" fill="#ff0000"/>
<circle cx="1100" cy="362" r="6" fill="#ff2000"/>
<circle cx="1093" cy="333" r="5" fill="#ff3000"/>
<circle cx="1104" cy="375" r="7" fill="#ffa000"/>
<circle cx="1115" cy="398" r="6" fill="#90f020"/>
<circle cx="1125" cy="360" r="5" fill="#30e0a0"/>
</g></g>
<path d="M717.1 253.3 L724.0 256.5 L727.0 259.3 L728.2 261.3 L729.1 264.1 L729.4 269.2 L733.0 271.9 L736.4 275.9 L738.5 279.9 L739.8 284.4 L751.1 284.4 L754.8 285.1 L757.6 286.3 L764.0 292.8 L773.5 303.8 L777.3 307.5 L783.9 312.5 L791.3 316.4 L801.9 319.9 L813.1 322.7 L818.3 323.4 L830.8 324.4 L835.3 325.2 L837.5 326.0 L841.5 329.8 L849.6 340.8 L862.3 355.1 L872.8 364.3 L877.1 367.4 L881.3 369.6 L885.4 370.8 L891.8 371.5 L903.4 371.6 L927.2 370.1 L934.0 370.3 L937.3 370.9 L943.3 374.1 L951.9 381.3 L963.9 390.4 L969.5 394.3 L974.8 397.5 L980.0 399.7 L985.2 401.5 L995.4 403.6 L1000.5 403.9 L1015.4 403.1 L1021.7 403.6 L1023.7 404.7 L1025.9 406.6 L1031.1 414.0 L1035.6 418.7 L1038.9 420.9 L1042.2 421.7 L1045.9 421.9 L1048.4 421.3 L1057.3 414.2 L1060.9 412.7 L1066.3 412.5 L1085.1 414.6 L1090.4 414.4 L1094.6 413.6 L1102.6 410.3 L1107.5 407.2 L1111.3 404.2 L1112.0 399.6 L1112.0 377.6 L1107.5 375.1 L1103.6 372.0 L1100.2 368.4 L1097.5 364.5 L1095.8 360.7 L1094.6 356.4 L1094.5 347.9 L1092.5 344.1 L1090.3 337.5 L1088.1 335.0 L1086.6 334.0 L1077.2 333.9 L1072.4 333.4 L1068.0 332.5 L1063.2 330.5 L1059.1 327.7 L1055.7 324.4 L1048.2 314.3 L1046.1 312.1 L1036.0 305.7 L1024.7 300.2 L1017.2 298.1 L991.7 293.9 L986.4 292.4 L982.4 290.6 L978.4 287.8 L975.5 284.7 L970.8 277.7 L965.8 268.0 L961.0 262.9 L952.4 256.0 L946.8 252.9 L940.1 250.1 L928.8 246.4 L918.0 244.1 L909.2 243.4 L888.3 243.3 L881.3 241.9 L875.1 238.7 L861.1 226.6 L857.7 224.2 L853.7 222.1 L843.4 218.1 L832.2 215.0 L825.3 213.7 L807.2 211.9 L800.4 210.0 L796.8 208.4 L793.8 206.3 L786.7 199.5 L783.4 195.3 L781.4 195.2 L773.4 197.5 L769.2 198.1 L764.6 198.0 L759.1 196.5 L755.8 198.9 L752.1 200.9 L748.1 202.4 L744.0 203.4 L739.9 203.8 L735.8 203.6 L728.2 201.9 L723.8 204.3 L720.9 207.9 L718.4 211.9 L717.1 216.1 L716.1 221.8 L715.7 226.1 L715.7 248.9 L716.1 252.5 L717.1 253.3Z" fill="#5f5f5f" stroke="#1e1e1e" stroke-width="0.8"/>
<clipPath id="cf"><path d="M714.7 253.1 L718.1 255.7 L723.2 257.8 L725.8 260.2 L726.8 261.9 L727.6 264.4 L728.1 269.9 L731.9 273.0 L735.0 276.5 L736.9 280.0 L738.4 284.9 L738.9 285.6 L750.9 285.8 L754.4 286.6 L756.8 287.6 L762.9 293.8 L772.4 304.8 L776.3 308.6 L783.1 313.8 L790.7 317.7 L801.4 321.4 L812.8 324.1 L818.1 324.9 L830.5 325.9 L836.7 327.3 L840.4 330.8 L848.5 341.8 L861.2 356.2 L871.9 365.5 L876.3 368.6 L880.8 371.0 L885.1 372.3 L891.8 373.0 L903.4 373.1 L927.2 371.6 L933.9 371.8 L936.8 372.3 L942.5 375.3 L951.0 382.4 L963.0 391.6 L968.7 395.6 L974.2 398.8 L979.4 401.1 L984.7 402.9 L995.2 405.1 L1000.6 405.4 L1015.4 404.6 L1021.2 405.0 L1024.8 407.6 L1030.0 415.0 L1034.6 419.8 L1038.3 422.3 L1042.0 423.2 L1046.0 423.4 L1049.0 422.7 L1058.5 415.2 L1062.0 414.0 L1066.3 414.0 L1085.0 416.1 L1090.5 415.9 L1095.0 415.1 L1099.8 413.3 L1105.0 410.7 L1110.0 407.3 L1112.7 404.7 L1113.5 399.6 L1113.4 377.2 L1112.9 376.4 L1108.3 373.7 L1104.3 370.6 L1101.2 367.2 L1098.9 363.8 L1097.1 359.9 L1096.0 356.0 L1096.0 347.4 L1093.9 343.5 L1091.7 336.8 L1089.2 333.9 L1086.7 332.6 L1077.3 332.4 L1072.6 331.9 L1068.5 331.0 L1063.9 329.2 L1060.0 326.5 L1056.8 323.4 L1049.4 313.4 L1046.9 310.8 L1036.7 304.4 L1025.3 298.8 L1017.4 296.6 L992.0 292.5 L986.9 291.0 L983.1 289.3 L979.3 286.6 L976.7 283.8 L972.1 276.9 L967.0 267.2 L962.1 261.8 L956.8 257.3 L953.2 254.7 L947.4 251.6 L940.6 248.7 L929.1 244.9 L918.2 242.6 L909.3 241.9 L888.3 241.8 L881.8 240.5 L876.0 237.5 L862.0 225.4 L858.5 222.9 L854.3 220.7 L843.9 216.6 L832.5 213.5 L825.5 212.2 L807.4 210.4 L800.9 208.6 L797.0 206.7 L793.1 203.8 L787.6 198.3 L784.3 194.1 L781.0 193.7 L773.0 196.0 L769.1 196.6 L765.0 196.5 L758.8 195.1 L752.2 199.2 L745.5 201.6 L741.2 202.2 L736.8 202.2 L732.7 201.6 L728.2 200.4 L722.8 203.2 L719.7 207.0 L717.0 211.4 L715.6 215.8 L714.6 221.7 L714.2 226.0 L714.2 249.0 L714.7 253.1Z"/></clipPath>
<path d="M723.2 192.1 L716.4 196.4 L712.2 201.5 L708.6 207.4 L707.0 212.1 L705.9 217.2 L705.0 223.4 L705.0 228.7 L706.7 238.3 L708.3 243.0 L709.8 245.6 L712.7 249.3 L717.1 253.3 L724.3 256.7 L726.6 258.9 L728.0 260.9 L728.9 263.3 L729.5 266.8 L729.0 276.1 L730.1 279.2 L731.9 282.0 L733.5 283.3 L735.8 284.1 L750.9 284.3 L754.8 285.1 L757.5 286.3 L764.0 292.8 L773.5 303.8 L777.3 307.5 L783.9 312.5 L791.3 316.4 L801.9 319.9 L813.1 322.7 L818.3 323.4 L830.8 324.4 L835.3 325.2 L837.5 326.0 L841.6 329.9 L849.6 340.8 L860.4 353.2 L870.6 362.6 L874.9 365.9 L879.2 368.6 L885.3 370.8 L891.8 371.5 L903.4 371.6 L927.2 370.1 L934.0 370.3 L937.3 370.9 L943.3 374.1 L951.9 381.3 L963.9 390.4 L969.5 394.3 L974.8 397.5 L980.0 399.7 L985.2 401.5 L995.4 403.6 L1000.5 403.9 L1015.4 403.1 L1021.7 403.6 L1023.7 404.7 L1025.9 406.6 L1031.1 414.0 L1035.6 418.7 L1038.9 420.9 L1042.3 421.8 L1045.9 421.9 L1048.4 421.3 L1057.3 414.2 L1060.9 412.7 L1066.3 412.5 L1085.1 414.6 L1091.8 414.2 L1097.6 412.6 L1104.2 409.4 L1110.5 404.9 L1115.9 399.5 L1119.9 393.6 L1121.3 388.7 L1122.3 381.1 L1123.6 375.2 L1125.2 370.5 L1119.8 369.2 L1115.0 367.0 L1110.9 364.0 L1107.7 360.5 L1105.8 356.7 L1105.0 352.6 L1105.5 348.4 L1107.0 344.6 L1105.2 343.6 L1103.5 341.9 L1102.5 340.0 L1099.9 332.3 L1095.2 326.9 L1091.4 324.4 L1088.3 323.4 L1074.8 322.9 L1071.4 322.2 L1068.3 321.0 L1065.8 319.2 L1063.6 317.0 L1056.7 307.5 L1052.9 303.6 L1047.5 300.0 L1041.2 296.2 L1028.8 290.2 L1021.3 287.9 L994.2 283.4 L987.8 281.3 L985.4 279.5 L983.4 277.3 L980.1 272.2 L975.7 263.4 L971.9 258.6 L966.5 253.3 L962.4 249.8 L953.7 244.3 L946.4 241.0 L936.5 237.4 L929.2 235.3 L921.9 233.8 L912.1 232.7 L888.9 232.5 L884.7 231.7 L880.3 229.1 L875.9 224.9 L866.3 216.9 L858.3 212.3 L846.7 207.8 L834.5 204.4 L826.7 202.9 L808.8 201.2 L804.1 199.9 L801.8 198.8 L799.1 196.7 L794.4 191.9 L790.0 186.4 L786.5 184.9 L782.8 184.4 L779.1 184.5 L770.7 187.0 L766.6 187.4 L761.8 185.9 L757.4 182.4 L754.9 185.7 L751.9 188.5 L748.6 190.6 L744.5 192.2 L739.5 193.0 L734.5 192.5 L729.8 190.8 L725.5 188.0 L724.5 190.5 L723.2 192.1Z" fill="none" stroke="#c8e060" stroke-width="0.9" clip-path="url(#cf)"/>
<path d="M880.0 267.1 L879.3 262.0 L878.1 257.0 L876.4 252.1 L874.1 247.4 L871.3 242.9 L868.0 238.7 L864.3 234.8 L860.2 231.3 L855.7 228.1 L850.8 225.4 L845.7 223.1 L840.4 221.2 L834.8 219.9 L829.2 219.0 L823.4 218.7 L817.6 218.8 L811.9 219.5 L806.3 220.6 L800.8 222.3 L795.5 224.4 L790.4 226.9 L785.7 229.9 L781.3 233.3 L777.2 237.1 L773.6 241.1 L770.5 245.5 L767.8 250.1 L765.7 254.9 L764.1 259.9 L763.1 265.0 L762.6 270.1 L762.6 275.3 L763.3 280.4 L764.5 285.4 L766.2 290.3 L768.5 295.0 L771.3 299.5 L774.6 303.7 L778.3 307.6 L782.4 311.1 L786.9 314.3 L791.8 317.0 L796.9 319.3 L802.2 321.2 L807.8 322.5 L813.4 323.4 L819.2 323.7 L825.0 323.6 L830.7 322.9 L836.3 321.8 L841.8 320.1 L847.1 318.0 L852.2 315.5 L856.9 312.5 L861.3 309.1 L865.4 305.3 L869.0 301.3 L872.1 296.9 L874.8 292.3 L876.9 287.5 L878.5 282.5 L879.5 277.4 L880.0 272.3 L880.0 267.1Z" fill="url(#vg)" stroke="#d0d6dc" stroke-width="1"/>
<path d="M1061.0 349.2 L1060.3 344.1 L1059.1 339.1 L1057.3 334.2 L1055.0 329.5 L1052.2 325.0 L1048.9 320.8 L1045.1 316.9 L1040.9 313.4 L1036.4 310.2 L1031.5 307.5 L1026.3 305.2 L1020.9 303.3 L1015.2 302.0 L1009.5 301.1 L1003.7 300.8 L997.8 300.9 L992.0 301.6 L986.3 302.7 L980.7 304.4 L975.4 306.5 L970.2 309.1 L965.4 312.1 L960.9 315.5 L956.9 319.2 L953.2 323.3 L950.0 327.7 L947.3 332.3 L945.2 337.2 L943.5 342.1 L942.5 347.2 L942.0 352.4 L942.0 357.6 L942.7 362.7 L943.9 367.7 L945.7 372.6 L948.0 377.3 L950.8 381.8 L954.1 386.0 L957.9 389.9 L962.1 393.4 L966.6 396.6 L971.5 399.3 L976.7 401.6 L982.1 403.5 L987.8 404.8 L993.5 405.7 L999.3 406.0 L1005.2 405.9 L1011.0 405.2 L1016.7 404.1 L1022.3 402.4 L1027.6 400.3 L1032.8 397.7 L1037.6 394.7 L1042.1 391.3 L1046.1 387.6 L1049.8 383.5 L1053.0 379.1 L1055.7 374.5 L1057.8 369.6 L1059.5 364.7 L1060.5 359.6 L1061.0 354.4 L1061.0 349.2Z" fill="url(#vg)" stroke="#d0d6dc" stroke-width="1"/>
<path d="M727.0 258.2 L733.5 259.3 L738.0 259.2 L741.8 258.6 L745.0 257.3 L749.3 254.3 L754.8 249.4 L758.8 244.9 L762.0 240.0 L764.4 234.5 L765.5 230.5 L766.0 226.8 L765.8 223.3 L763.9 218.4 L761.0 214.2 L757.9 211.0 L754.4 208.6 L748.3 206.6 L742.2 205.9 L735.9 205.9 L728.4 206.9 L723.2 208.5 L718.5 210.9 L714.2 214.1 L710.8 218.3 L708.8 223.9 L708.0 230.9 L708.4 235.7 L709.9 240.4 L714.3 247.9 L718.1 252.6 L719.4 253.9 L724.0 255.7 L727.0 258.2Z" fill="url(#vg)" stroke="#20e060" stroke-width="1.4"/>
<path d="M891.5 252.6 L890.6 255.2 L891.0 260.7 L892.4 263.3 L894.5 264.6 L919.5 270.9 L929.1 274.4 L936.3 278.2 L945.3 284.0 L949.1 287.1 L957.2 294.9 L963.1 298.2 L967.1 299.1 L969.3 298.7 L972.3 296.2 L973.9 293.6 L974.7 290.7 L974.7 289.3 L973.8 286.2 L970.9 281.2 L965.1 274.3 L959.7 269.3 L953.1 264.3 L945.3 259.4 L936.2 254.5 L929.9 251.7 L923.4 249.9 L916.1 248.7 L908.8 248.1 L900.0 248.0 L896.5 248.5 L894.4 249.5 L891.5 252.6Z" fill="url(#vg)" stroke="#20d0d0" stroke-width="1.4"/>
<path d="M890.4 285.5 L888.1 289.3 L884.0 300.0 L876.3 310.2 L874.7 313.3 L873.9 316.0 L873.8 318.5 L874.4 321.0 L876.0 324.0 L882.7 332.2 L889.6 338.3 L894.4 341.5 L902.5 345.2 L910.7 347.6 L918.5 348.3 L926.1 347.6 L930.3 346.2 L932.0 345.3 L934.2 342.8 L937.3 332.0 L943.7 320.1 L946.4 311.9 L947.3 307.8 L947.4 303.8 L946.7 300.0 L944.9 296.4 L940.5 291.2 L936.7 288.1 L932.5 285.4 L924.6 281.5 L916.0 279.0 L910.5 278.7 L901.8 279.9 L894.0 282.7 L890.4 285.5Z" fill="url(#vg)" stroke="#30e050" stroke-width="1.4"/>
<path d="M933.5 369.5 L931.2 366.2 L926.7 364.0 L921.3 362.8 L903.3 359.8 L896.8 357.4 L890.5 354.3 L876.0 345.0 L870.9 340.6 L861.9 331.4 L858.0 329.0 L856.2 328.7 L852.7 329.5 L849.7 331.7 L846.4 335.4 L855.2 346.3 L862.8 354.7 L873.2 363.8 L877.5 366.8 L881.6 368.9 L887.5 370.5 L900.0 370.9 L926.9 369.4 L933.5 369.5Z" fill="url(#vg)" stroke="#20d0c0" stroke-width="1.4"/>
<path d="M1118.3 395.1 L1118.0 389.3 L1116.9 385.5 L1113.9 380.4 L1110.0 376.0 L1105.8 372.2 L1100.7 369.2 L1096.7 368.0 L1091.7 367.5 L1083.1 368.0 L1075.3 369.3 L1069.4 371.1 L1064.6 373.7 L1060.9 377.3 L1058.4 382.1 L1056.9 387.5 L1056.5 393.3 L1056.7 397.6 L1057.5 401.8 L1059.3 405.3 L1062.1 408.0 L1065.8 410.1 L1072.2 412.5 L1085.1 413.9 L1090.3 413.7 L1094.4 412.9 L1098.9 411.3 L1103.9 408.8 L1108.6 405.5 L1112.8 401.8 L1117.6 396.1 L1118.3 395.1Z" fill="url(#vg)" stroke="#20e080" stroke-width="1.4"/>
<path d="M750.0 171.8 L749.1 167.9 L746.6 164.8 L743.0 162.7 L738.7 162.0 L734.5 162.9 L731.0 165.1 L728.7 168.4 L728.0 172.2 L728.9 176.1 L731.4 179.2 L735.0 181.3 L739.3 182.0 L743.5 181.1 L747.0 178.9 L749.3 175.6 L750.0 171.8Z" fill="url(#vg)" stroke="#c8d0d8" stroke-width="1"/>
<path d="M792.2 206.7 L791.2 202.8 L788.7 199.5 L785.0 197.3 L780.7 196.6 L776.5 197.5 L772.9 199.8 L770.6 203.3 L769.8 207.3 L770.8 211.2 L773.3 214.5 L777.0 216.7 L781.3 217.4 L785.5 216.5 L789.1 214.2 L791.4 210.7 L792.2 206.7Z" fill="url(#vg)" stroke="#c8d0d8" stroke-width="1"/>
<path d="M753.0 279.8 L752.1 275.9 L749.8 272.9 L746.5 270.9 L742.3 270.0 L738.0 270.7 L734.6 272.6 L732.1 275.7 L731.0 279.5 L732.4 281.6 L734.7 283.1 L740.1 283.7 L752.2 283.8 L753.0 279.8Z" fill="url(#vg)" stroke="#c8d0d8" stroke-width="1"/>
<path d="M1093.3 344.7 L1092.3 340.7 L1089.8 337.3 L1086.1 335.0 L1081.7 334.3 L1077.4 335.2 L1073.8 337.6 L1071.5 341.1 L1070.7 345.3 L1071.7 349.3 L1074.2 352.7 L1077.9 355.0 L1082.3 355.7 L1086.6 354.8 L1090.2 352.4 L1092.5 348.9 L1093.3 344.7Z" fill="url(#vg)" stroke="#c8d0d8" stroke-width="1"/>
<path d="M1139.9 353.1 L1139.0 349.5 L1136.6 346.6 L1133.1 344.6 L1128.9 344.0 L1124.9 344.8 L1121.5 346.9 L1119.2 350.0 L1118.5 353.5 L1119.4 357.1 L1121.8 360.0 L1125.3 362.0 L1129.5 362.6 L1133.5 361.8 L1136.9 359.7 L1139.2 356.6 L1139.9 353.1Z" fill="url(#vg)" stroke="#c8d0d8" stroke-width="1"/>
<path d="M1051.2 417.9 L1050.1 415.3 L1048.2 413.1 L1045.9 411.6 L1043.0 410.7 L1040.2 410.5 L1037.2 411.1 L1034.5 412.5 L1032.5 414.5 L1037.7 419.5 L1041.2 420.9 L1044.7 421.2 L1047.6 420.9 L1049.5 419.7 L1051.2 417.9Z" fill="url(#vg)" stroke="#c8d0d8" stroke-width="1"/>
<line x1="769" y1="203.7" x2="781" y2="207.4" stroke="#d8dde2" stroke-width="1"/>
<line x1="870" y1="186" x2="822" y2="273" stroke="#d8dde2" stroke-width="1"/>
<line x1="1092" y1="300" x2="1081" y2="344" stroke="#d8dde2" stroke-width="1"/>
<line x1="740" y1="330" x2="741" y2="279" stroke="#d8dde2" stroke-width="1"/>
<line x1="965" y1="443" x2="1001" y2="357" stroke="#d8dde2" stroke-width="1"/>
<line x1="1053" y1="443" x2="1043" y2="424" stroke="#d8dde2" stroke-width="1"/>
<g fill="none" stroke-linecap="round"><line x1="604.5" y1="484" x2="612" y2="469.5" stroke="#2a9a2a" stroke-width="1.5"/><line x1="604.5" y1="484" x2="615.5" y2="489.3" stroke="#b02020" stroke-width="1.6"/><line x1="604.8" y1="484" x2="605.5" y2="475.5" stroke="#2030d0" stroke-width="2"/></g>
<text x="610.5" y="469" font-size="4.5" fill="#2a9a2a" font-family="Liberation Sans" font-weight="bold">Y</text><text x="618.5" y="493.3" font-size="4.8" fill="#e82020" font-family="Liberation Sans" font-weight="bold">X</text>
</svg><svg class="a" style="left:0;top:0" width="420" height="600" viewBox="0 0 420 600">
<defs>
<linearGradient id="body" x1="128" x2="283" y1="0" y2="0" gradientUnits="userSpaceOnUse">
 <stop offset="0" stop-color="#3a3535"/><stop offset="0.025" stop-color="#2a2626"/><stop offset="0.05" stop-color="#1e1c1c"/>
 <stop offset="0.13" stop-color="#262222"/><stop offset="0.15" stop-color="#6e6562"/><stop offset="0.22" stop-color="#8a817d"/><stop offset="0.31" stop-color="#786e6b"/><stop offset="0.335" stop-color="#2a2626"/>
 <stop offset="0.36" stop-color="#1c1a1b"/><stop offset="0.579" stop-color="#201e1f"/>
 <stop offset="0.58" stop-color="#1a66c8"/><stop offset="0.67" stop-color="#1b70d2"/><stop offset="0.70" stop-color="#6a90d8"/><stop offset="0.735" stop-color="#a9b3d4"/><stop offset="0.83" stop-color="#a4afd0"/><stop offset="0.845" stop-color="#4a70b8"/><stop offset="0.86" stop-color="#1e4a98"/><stop offset="0.87" stop-color="#1a1a1a"/>
 <stop offset="0.875" stop-color="#8a7e78"/><stop offset="0.9" stop-color="#5a5050"/><stop offset="0.93" stop-color="#6a6060"/>
 <stop offset="0.935" stop-color="#1a4aa0"/><stop offset="0.96" stop-color="#3a70c8"/><stop offset="0.99" stop-color="#1a4090"/><stop offset="1" stop-color="#f0f0f0"/>
</linearGradient>
<linearGradient id="cap" x1="128" x2="283" y1="0" y2="0" gradientUnits="userSpaceOnUse">
 <stop offset="0" stop-color="#3a3636"/><stop offset="0.06" stop-color="#2a2828"/><stop offset="0.14" stop-color="#2e2b2b"/><stop offset="0.155" stop-color="#5e5654"/><stop offset="0.3" stop-color="#645c5a"/><stop offset="0.335" stop-color="#222020"/>
 <stop offset="0.67" stop-color="#1e1c1c"/><stop offset="0.68" stop-color="#7a7270"/><stop offset="0.85" stop-color="#7e7674"/><stop offset="0.865" stop-color="#2e2a2a"/><stop offset="1" stop-color="#403a3a"/>
</linearGradient>
<linearGradient id="ring" x1="129" x2="283" y1="0" y2="0" gradientUnits="userSpaceOnUse">
 <stop offset="0" stop-color="#7a7370"/><stop offset="0.12" stop-color="#8f8884"/><stop offset="0.16" stop-color="#c9c1bd"/><stop offset="0.4" stop-color="#c2bab6"/><stop offset="0.5" stop-color="#aaa29e"/><stop offset="0.75" stop-color="#c6beba"/><stop offset="0.88" stop-color="#a8a09c"/><stop offset="1" stop-color="#8a8380"/>
</linearGradient>
<linearGradient id="base" x1="129" x2="283" y1="0" y2="0" gradientUnits="userSpaceOnUse">
 <stop offset="0" stop-color="#4a4545"/><stop offset="0.2" stop-color="#3e3a3a"/><stop offset="0.5" stop-color="#333030"/><stop offset="0.8" stop-color="#3a3636"/><stop offset="1" stop-color="#2e2b2b"/>
</linearGradient>
<linearGradient id="bar" x1="0" x2="0" y1="278" y2="302" gradientUnits="userSpaceOnUse">
 <stop offset="0" stop-color="#a89e98"/><stop offset="0.1" stop-color="#857c78"/><stop offset="0.5" stop-color="#7a716d"/><stop offset="1" stop-color="#6a625e"/>
</linearGradient>
<linearGradient id="shaft" x1="378" x2="398" y1="0" y2="0" gradientUnits="userSpaceOnUse">
 <stop offset="0" stop-color="#3a3432"/><stop offset="0.25" stop-color="#7a726e"/><stop offset="0.5" stop-color="#c8c0b8"/><stop offset="0.75" stop-color="#7a726e"/><stop offset="1" stop-color="#3a3432"/>
</linearGradient>
<linearGradient id="pcap" x1="371" x2="405" y1="0" y2="0" gradientUnits="userSpaceOnUse">
 <stop offset="0" stop-color="#0e0e0e"/><stop offset="0.12" stop-color="#3a3636"/><stop offset="0.3" stop-color="#4a4646"/><stop offset="0.42" stop-color="#141414"/><stop offset="0.65" stop-color="#1a1a1a"/><stop offset="0.8" stop-color="#3a3838"/><stop offset="1" stop-color="#121212"/>
</linearGradient>
<linearGradient id="hlfade" x1="0" x2="0" y1="174" y2="334" gradientUnits="userSpaceOnUse"><stop offset="0" stop-color="#151313" stop-opacity="0.45"/><stop offset="1" stop-color="#151313" stop-opacity="0"/></linearGradient>
<pattern id="carbon" width="4" height="4" patternUnits="userSpaceOnUse" patternTransform="rotate(45)">
 <rect width="4" height="4" fill="none"/><rect width="2" height="2" fill="#ffffff" opacity="0.05"/>
</pattern>
</defs>
<path d="M129 199.5 C112 202 93 208.5 72 220 C56 229 46.5 240 46.5 252 C47 264 56 271.5 72 272 L129 272" fill="none" stroke="#2e2c2c" stroke-width="8"/>
<path d="M129 199.5 C112 202 93 208.5 72 220 C56 229 46.5 240 46.5 252 C47 264 56 271.5 72 272 L129 272" fill="none" stroke="#666262" stroke-width="6" stroke-dasharray="1.8 1.3" opacity="0.8"/><path d="M129 199.5 C112 202 93 208.5 72 220 C56 229 46.5 240 46.5 252 C47 264 56 271.5 72 272 L129 272" fill="none" stroke="#1a1818" stroke-width="1.2" opacity="0.8"/>
<rect x="55" y="278" width="74" height="23.5" fill="url(#bar)"/>
<rect x="16.5" y="277.5" width="38.5" height="28.5" fill="#6a6260"/><rect x="16.5" y="277.5" width="3" height="28.5" fill="#a8a09c"/><rect x="16.5" y="303.5" width="20" height="2.5" fill="#b8b0ac"/><rect x="52.5" y="277.5" width="2.5" height="28.5" fill="#3e3836"/>
<circle cx="29" cy="292.5" r="2.6" fill="none" stroke="#8e8682" stroke-width="1"/>
<rect x="14" y="269" width="24" height="9" fill="#5a5250"/><rect x="16" y="269" width="3.5" height="9" fill="#c8c0ba"/><rect x="25" y="269" width="4" height="9" fill="#8a827e"/><path d="M38 277 L45 275 L60 276.5 L60 278 L38 278 Z" fill="#c8c0bc"/>
<rect x="9.5" y="264.5" width="32" height="5" rx="1.5" fill="#2a2626"/><rect x="10" y="264.5" width="31" height="1.2" fill="#4a4442"/>
<path d="M157 104 C152 110 152 118 156 124" fill="none" stroke="#111" stroke-width="5"/>
<rect x="152.3" y="83" width="13" height="11" rx="2" fill="#1a1a1a"/><rect x="155" y="84" width="2" height="9" fill="#3a3a3a"/>
<rect x="261" y="86" width="12.3" height="11" rx="2" fill="#1a1a1a"/><rect x="269" y="87" width="2" height="9" fill="#3a3a3a"/>
<rect x="165.7" y="59.5" width="95.5" height="60" rx="3" fill="#141414"/>
<rect x="165.7" y="98" width="2.5" height="20" fill="#6a6462"/>
<rect x="181" y="64.2" width="66.3" height="41.3" rx="1.5" fill="#1c1c20"/><rect x="181" y="66" width="1" height="38" fill="#777"/>
<path d="M200 98 C190 80 215 72 240 70 M225 104 C250 95 245 80 232 72" fill="none" stroke="#3a3a44" stroke-width="0.8"/>
<rect x="191.8" y="75.7" width="15.2" height="11.6" rx="1" fill="#3c78c0"/><path d="M194 78.5 L204.5 78.5 L196 85 L205 85" fill="none" stroke="#223" stroke-width="1.6"/>
<text x="208.3" y="86.8" font-family="Liberation Sans" font-weight="bold" font-size="10.2" fill="#e8e8e8" textLength="29.7" lengthAdjust="spacingAndGlyphs">CAT</text>
<rect x="199" y="90.5" width="34" height="1.3" fill="#8a9ab8" opacity="0.8"/><rect x="200" y="93.5" width="32" height="1" fill="#8a9ab8" opacity="0.6"/>
<path d="M129 127 Q129 118 205 118.5 Q281 118 281.5 126 L282.5 175 Q205 170 129 176 Z" fill="url(#cap)"/>
<path d="M129 127 Q205 116 281.5 126" fill="none" stroke="#111" stroke-width="1.2" opacity="0.7"/>
<path d="M128.5 174 L283 174 L283 470 L128.5 470 Z" fill="url(#body)"/>
<rect x="181" y="174" width="37" height="296" fill="url(#carbon)"/><rect x="140" y="174" width="45" height="160" fill="url(#hlfade)"/>
<rect x="284" y="174" width="2" height="296" fill="#fff"/>
<path d="M129 175.5 Q205 169 282.5 173" fill="none" stroke="#cfc6c0" stroke-width="2"/>
<path d="M168 118 L182.5 118 L182 121 L168 121 Z" fill="#b8b0aa"/>
<path d="M168 118.5 L175.5 118.5 L183 186.5 L176 186.5 Z" fill="#3e3634"/><path d="M170 118.5 L173 118.5 L180.5 186.5 L177.6 186.5 Z" fill="#8a827e"/><path d="M171 118.5 L172.2 118.5 L179.6 186.5 L178.4 186.5 Z" fill="#c8c0ba"/>
<path d="M156.7 411.3 L196 411.3 Q201.3 411.3 201.3 416.5 L201.3 446.7 L156.7 446.7 Z" fill="#3d7ed8" opacity="0.92"/>
<rect x="156.7" y="411.3" width="23" height="35.4" fill="#ffffff" opacity="0.12"/>
<path d="M160 420 L193 420 L168 439 L201 439" fill="none" stroke="#333" stroke-width="4.2" stroke-linejoin="bevel"/>
<circle cx="161" cy="420" r="2.5" fill="#333"/>
<text x="158.7" y="459.5" font-family="Liberation Sans" font-weight="bold" font-size="12.5" fill="#e6e6e6" textLength="42.3" lengthAdjust="spacingAndGlyphs">CAT</text>
<rect x="262" y="270" width="80" height="32" fill="#1e1d1d"/><rect x="262" y="270" width="80" height="32" fill="url(#carbon)"/><rect x="262" y="269.5" width="78" height="2.5" fill="#3a3838"/>
<path d="M338 273 L378.5 273 L378.5 303.5 L342 303.5 L338 300 Z" fill="#151515"/>
<ellipse cx="369" cy="290" rx="3.5" ry="2" fill="none" stroke="#6a6260" stroke-width="0.9"/>
<path d="M343 272 C355 268 360 258 373 256" fill="none" stroke="#2a2a2a" stroke-width="2"/>
<rect x="370.7" y="234" width="34.3" height="28" rx="3" fill="url(#pcap)"/><rect x="372" y="236" width="31" height="2.5" fill="#3a3a3a"/>
<rect x="372" y="261.5" width="30" height="6.5" fill="#c8c0ba"/><rect x="372" y="266.5" width="30" height="1.5" fill="#7a726e"/>
<rect x="378" y="268" width="20" height="42" fill="url(#shaft)"/>
<rect x="377.5" y="309" width="21" height="31" rx="2" fill="#1e1e1e"/><rect x="381" y="310" width="3" height="29" fill="#3a3a3a"/>
<rect x="381.7" y="340" width="13.3" height="30" fill="url(#shaft)"/><rect x="381.7" y="350" width="13.3" height="14" fill="#8a8480" opacity="0.5"/>
<rect x="384.5" y="370" width="7" height="8" fill="#8a827e"/>
<rect x="386.5" y="377" width="2.2" height="33" fill="#7a7470"/><rect x="383" y="382" width="20" height="2.2" fill="#9a928e"/>
<path d="M129.5 469 Q206 464 283.4 469 L283.4 488 Q206 497 129.5 488 Z" fill="url(#ring)"/>
<path d="M129.5 469.5 Q206 464.5 283.4 469.5" fill="none" stroke="#5a5452" stroke-width="1"/>
<path d="M129.5 484 Q206 490 283.4 483" fill="none" stroke="#8a827e" stroke-width="0.7"/><path d="M129.5 486 Q206 493 283.4 486" fill="none" stroke="#d8d0cc" stroke-width="1.5"/>
<path d="M129.5 488 Q206 497 283.4 488 L283 515 Q206 530 130 515 Z" fill="url(#base)"/>
<path d="M175 495 L195 495 L195 503 L175 503 Z M205 495 L240 495 L232 503 L205 503 Z" fill="#1e1c1c" opacity="0.8"/>
<rect x="170" y="520" width="35" height="3" rx="1.5" fill="#d0ccca"/>
</svg>
</body></html>
